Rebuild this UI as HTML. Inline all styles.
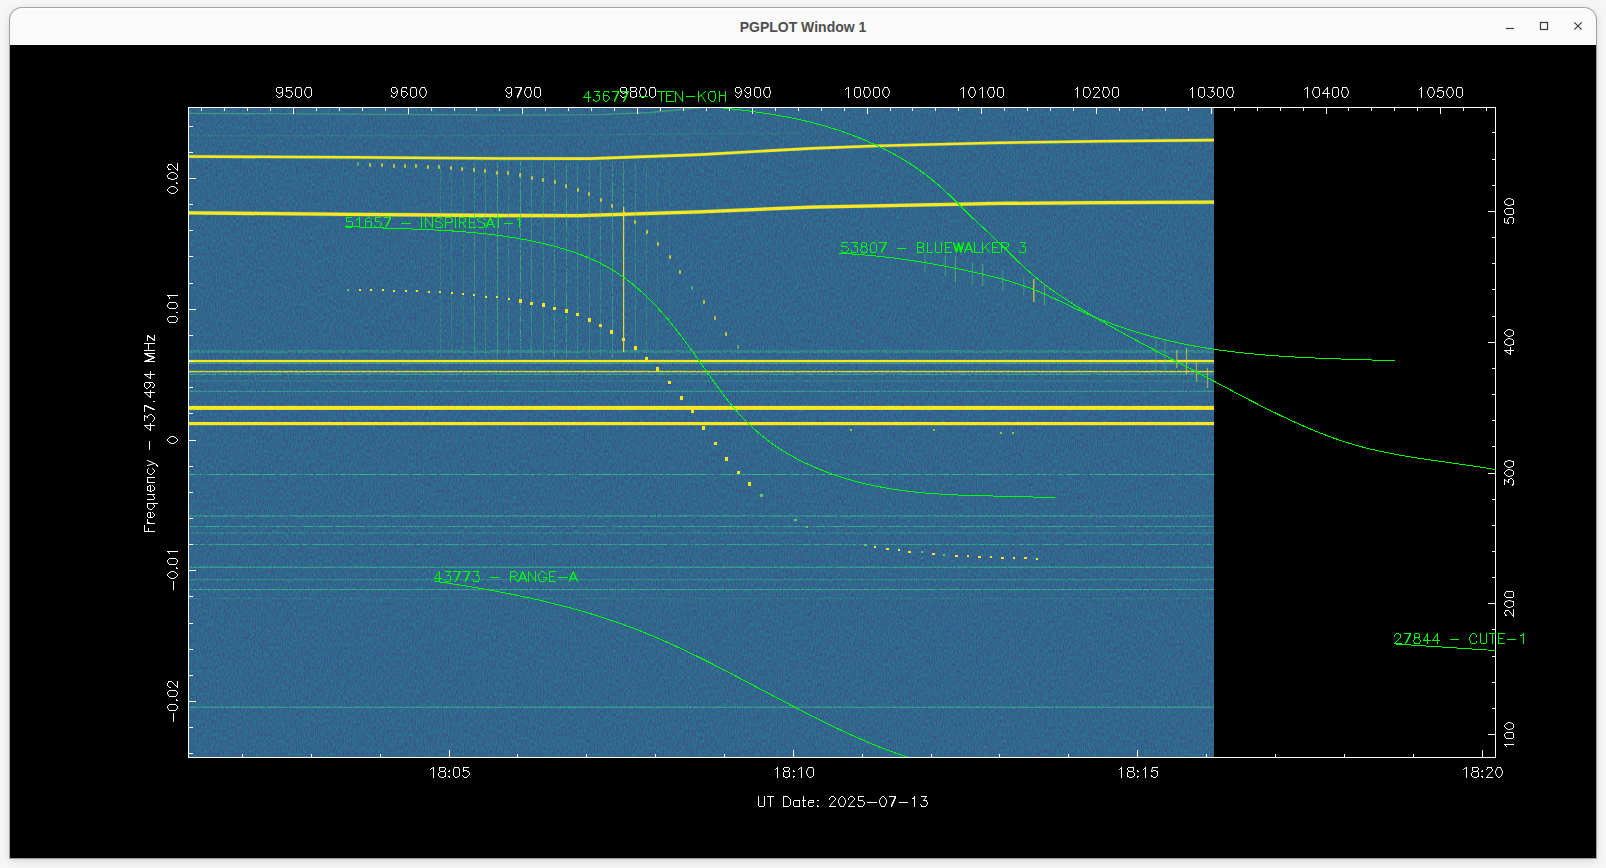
<!DOCTYPE html><html><head><meta charset="utf-8"><style>
html,body{margin:0;padding:0;width:1606px;height:868px;overflow:hidden;background:#f6f6f6;}
#win{position:absolute;left:10px;top:8px;width:1586px;height:850px;border-radius:12px 12px 0 0;background:#000;box-shadow:0 2px 8px rgba(0,0,0,0.16),0 0 0 1px rgba(0,0,0,0.3);}
#tb{position:absolute;left:0;top:0;width:1586px;height:37px;background:#fafafa;border-radius:12px 12px 0 0;box-shadow:inset 0 1px 0 #fff;}
#title{position:absolute;left:0;width:1586px;top:11px;text-align:center;font:bold 14px "Liberation Sans",sans-serif;color:#4f4f4f;letter-spacing:0px;}
svg{position:absolute;left:0;top:0;}
</style></head><body>
<div id="win"><div id="tb"><div id="title">PGPLOT Window 1</div></div></div>
<svg width="1606" height="868" viewBox="0 0 1606 868">
<g stroke="#3c3c3c" stroke-width="1.2" fill="none">
<path d="M1506 28.5H1514"/>
<rect x="1540.5" y="22.5" width="7" height="7"/>
<path d="M1574.3 22.3L1581.7 29.7M1581.7 22.3L1574.3 29.7"/>
</g>
<defs>
<filter id="nz" x="0" y="0" width="100%" height="100%" color-interpolation-filters="sRGB"><feTurbulence type="fractalNoise" baseFrequency="0.85 0.3" numOctaves="2" seed="3" result="t"/><feColorMatrix in="t" type="matrix" values="-0.14 0 0 0 0.266  0.32 0 0 0 0.24  0 0 0 0 0.553  0 0 0 0 1"/></filter>
<filter id="sp" x="0" y="0" width="100%" height="100%" color-interpolation-filters="sRGB"><feTurbulence type="fractalNoise" baseFrequency="0.5 0.5" numOctaves="2" seed="11" result="t"/><feColorMatrix in="t" type="matrix" values="0 0 0 0 0  0 0 0 0 0  0 0 0 0 0  6 0 0 0 -2.2" result="m"/><feComposite in="SourceGraphic" in2="m" operator="in"/></filter>
<clipPath id="dc"><rect x="189" y="108" width="1025" height="649"/></clipPath>
<clipPath id="pc"><rect x="189" y="108" width="1306" height="649"/></clipPath>
</defs>
<rect x="189" y="108" width="1025" height="649" fill="#32668d"/>
<rect x="189" y="108" width="1025" height="649" filter="url(#nz)"/>
<g clip-path="url(#dc)">
<g filter="url(#sp)">
<rect x="189" y="350" width="1025" height="3" fill="#3cbf8a" fill-opacity="0.375"/>
<rect x="189" y="362.8" width="1025" height="1" fill="#3cbf8a" fill-opacity="1"/>
<rect x="189" y="373.7" width="1025" height="1" fill="#3cbf8a" fill-opacity="1"/>
<rect x="189" y="390.8" width="1025" height="1" fill="#3cbf8a" fill-opacity="0.8250000000000001"/>
<rect x="189" y="380.5" width="1025" height="1" fill="#3cbf8a" fill-opacity="0.375"/>
<rect x="189" y="474" width="1025" height="1" fill="#3cbf8a" fill-opacity="0.9750000000000001"/>
<rect x="189" y="515.5" width="1025" height="1" fill="#3cbf8a" fill-opacity="0.9750000000000001"/>
<rect x="189" y="526" width="1025" height="1" fill="#3cbf8a" fill-opacity="0.8250000000000001"/>
<rect x="189" y="532.5" width="1025" height="1" fill="#3cbf8a" fill-opacity="0.5249999999999999"/>
<rect x="189" y="544" width="1025" height="1" fill="#3cbf8a" fill-opacity="0.75"/>
<rect x="189" y="566.7" width="1025" height="1" fill="#3cbf8a" fill-opacity="1"/>
<rect x="189" y="579.2" width="1025" height="1" fill="#3cbf8a" fill-opacity="0.6000000000000001"/>
<rect x="189" y="589.1" width="1025" height="1" fill="#3cbf8a" fill-opacity="0.9750000000000001"/>
<rect x="189" y="598.2" width="1025" height="1" fill="#3cbf8a" fill-opacity="0.27"/>
<rect x="189" y="706.7" width="1025" height="1" fill="#3cbf8a" fill-opacity="1"/>
<rect x="189" y="370.9" width="1025" height="1.3" fill="#fde725"/>
</g>
<rect x="189" y="350" width="1025" height="3" fill="#2fb08e" fill-opacity="0.1125"/>
<rect x="189" y="362.8" width="1025" height="1" fill="#2fb08e" fill-opacity="0.4275"/>
<rect x="189" y="373.7" width="1025" height="1" fill="#2fb08e" fill-opacity="0.36000000000000004"/>
<rect x="189" y="390.8" width="1025" height="1" fill="#2fb08e" fill-opacity="0.24750000000000003"/>
<rect x="189" y="380.5" width="1025" height="1" fill="#2fb08e" fill-opacity="0.1125"/>
<rect x="189" y="474" width="1025" height="1" fill="#2fb08e" fill-opacity="0.29250000000000004"/>
<rect x="189" y="515.5" width="1025" height="1" fill="#2fb08e" fill-opacity="0.29250000000000004"/>
<rect x="189" y="526" width="1025" height="1" fill="#2fb08e" fill-opacity="0.24750000000000003"/>
<rect x="189" y="532.5" width="1025" height="1" fill="#2fb08e" fill-opacity="0.1575"/>
<rect x="189" y="544" width="1025" height="1" fill="#2fb08e" fill-opacity="0.225"/>
<rect x="189" y="566.7" width="1025" height="1" fill="#2fb08e" fill-opacity="0.3825"/>
<rect x="189" y="579.2" width="1025" height="1" fill="#2fb08e" fill-opacity="0.18000000000000002"/>
<rect x="189" y="589.1" width="1025" height="1" fill="#2fb08e" fill-opacity="0.29250000000000004"/>
<rect x="189" y="598.2" width="1025" height="1" fill="#2fb08e" fill-opacity="0.081"/>
<rect x="189" y="706.7" width="1025" height="1" fill="#2fb08e" fill-opacity="0.405"/>
<rect x="189" y="370.9" width="1025" height="1.3" fill="#dfe02e" fill-opacity="0.7"/>
<rect x="189" y="359.9" width="1025" height="2.3" fill="#fde725"/>
<rect x="189" y="405.9" width="1025" height="4" fill="#fde725"/>
<rect x="189" y="422" width="1025" height="3.2" fill="#fde725"/>
<polyline points="189,113.4 350,114.2 524,115.1 600,114.6 650,112.5 682,109.5 700,107.8" stroke="#48c16e" stroke-opacity="0.55" stroke-width="1.3" fill="none"/>
<polyline points="189,135.7 500,135.5 800,133" stroke="#3cbb75" stroke-opacity="0.18" stroke-width="1.5" fill="none"/>
<polyline points="189,156.5 350,157.3 500,158.5 590,158.6 700,154.6 812,148.4 880,145.8 1000,142.8 1100,141.3 1213,140.1 1225,140" stroke="#5ec962" stroke-opacity="0.35" stroke-width="3.8" fill="none"/>
<polyline points="189,212.9 350,214.3 500,215.5 580,215.7 700,211.8 812,207.1 1000,203.4 1100,202.7 1213,202.2 1225,202.1" stroke="#5ec962" stroke-opacity="0.35" stroke-width="4.4" fill="none"/>
<polyline points="189,156.5 350,157.3 500,158.5 590,158.6 700,154.6 812,148.4 880,145.8 1000,142.8 1100,141.3 1213,140.1 1225,140" stroke="#fde725" stroke-width="2.6" fill="none"/>
<polyline points="189,212.9 350,214.3 500,215.5 580,215.7 700,211.8 812,207.1 1000,203.4 1100,202.7 1213,202.2 1225,202.1" stroke="#fde725" stroke-width="3.3" fill="none"/>
<g filter="url(#sp)">
<rect x="440" y="162" width="1" height="196" fill="#48c16e" fill-opacity="0.3"/>
<rect x="451" y="162" width="1" height="196" fill="#48c16e" fill-opacity="0.24"/>
<rect x="463" y="162" width="1" height="196" fill="#48c16e" fill-opacity="0.24"/>
<rect x="474" y="162" width="1" height="196" fill="#48c16e" fill-opacity="0.54"/>
<rect x="485" y="162" width="1" height="196" fill="#48c16e" fill-opacity="0.36"/>
<rect x="497" y="162" width="1" height="196" fill="#48c16e" fill-opacity="0.66"/>
<rect x="508" y="162" width="1" height="196" fill="#48c16e" fill-opacity="0.36"/>
<rect x="520" y="162" width="1" height="196" fill="#48c16e" fill-opacity="0.72"/>
<rect x="531" y="162" width="1" height="196" fill="#48c16e" fill-opacity="0.42"/>
<rect x="543" y="162" width="1" height="196" fill="#48c16e" fill-opacity="0.36"/>
<rect x="554" y="162" width="1" height="196" fill="#48c16e" fill-opacity="0.54"/>
<rect x="566" y="162" width="1" height="196" fill="#48c16e" fill-opacity="0.54"/>
<rect x="577" y="162" width="1" height="196" fill="#48c16e" fill-opacity="0.36"/>
<rect x="589" y="162" width="1" height="196" fill="#48c16e" fill-opacity="0.36"/>
<rect x="600" y="162" width="1" height="196" fill="#48c16e" fill-opacity="0.42"/>
<rect x="612" y="162" width="1" height="196" fill="#48c16e" fill-opacity="0.6"/>
<rect x="635" y="162" width="1" height="196" fill="#48c16e" fill-opacity="0.36"/>
<rect x="646" y="162" width="1" height="196" fill="#48c16e" fill-opacity="0.3"/>
<rect x="657" y="162" width="1" height="196" fill="#48c16e" fill-opacity="0.18"/>
<rect x="669" y="162" width="1" height="196" fill="#48c16e" fill-opacity="0.144"/>
<rect x="623" y="162" width="1" height="45" fill="#5ec962" fill-opacity="0.6"/>
</g>
<rect x="440" y="162" width="1" height="196" fill="#3cbb75" fill-opacity="0.0875"/>
<rect x="451" y="162" width="1" height="196" fill="#3cbb75" fill-opacity="0.06999999999999999"/>
<rect x="463" y="162" width="1" height="196" fill="#3cbb75" fill-opacity="0.06999999999999999"/>
<rect x="474" y="162" width="1" height="196" fill="#3cbb75" fill-opacity="0.1575"/>
<rect x="485" y="162" width="1" height="196" fill="#3cbb75" fill-opacity="0.105"/>
<rect x="497" y="162" width="1" height="196" fill="#3cbb75" fill-opacity="0.1925"/>
<rect x="508" y="162" width="1" height="196" fill="#3cbb75" fill-opacity="0.105"/>
<rect x="520" y="162" width="1" height="196" fill="#3cbb75" fill-opacity="0.21"/>
<rect x="531" y="162" width="1" height="196" fill="#3cbb75" fill-opacity="0.12249999999999998"/>
<rect x="543" y="162" width="1" height="196" fill="#3cbb75" fill-opacity="0.105"/>
<rect x="554" y="162" width="1" height="196" fill="#3cbb75" fill-opacity="0.1575"/>
<rect x="566" y="162" width="1" height="196" fill="#3cbb75" fill-opacity="0.1575"/>
<rect x="577" y="162" width="1" height="196" fill="#3cbb75" fill-opacity="0.105"/>
<rect x="589" y="162" width="1" height="196" fill="#3cbb75" fill-opacity="0.105"/>
<rect x="600" y="162" width="1" height="196" fill="#3cbb75" fill-opacity="0.12249999999999998"/>
<rect x="612" y="162" width="1" height="196" fill="#3cbb75" fill-opacity="0.175"/>
<rect x="635" y="162" width="1" height="196" fill="#3cbb75" fill-opacity="0.105"/>
<rect x="646" y="162" width="1" height="196" fill="#3cbb75" fill-opacity="0.0875"/>
<rect x="657" y="162" width="1" height="196" fill="#3cbb75" fill-opacity="0.0525"/>
<rect x="669" y="162" width="1" height="196" fill="#3cbb75" fill-opacity="0.041999999999999996"/>
<rect x="623" y="207" width="1.2" height="145" fill="#f0e530" fill-opacity="0.9"/>
<rect x="357.25" y="162.25" width="1.5" height="3.5" fill="#5ec962"/>
<rect x="369.25" y="163.25" width="1.5" height="3.5" fill="#f5e41e"/>
<rect x="381.25" y="163.25" width="1.5" height="3.5" fill="#f5e41e"/>
<rect x="393.25" y="164.25" width="1.5" height="3.5" fill="#f5e41e"/>
<rect x="404.25" y="164.25" width="1.5" height="3.5" fill="#f5e41e"/>
<rect x="415.25" y="164.25" width="1.5" height="3.5" fill="#f5e41e"/>
<rect x="427.25" y="165.25" width="1.5" height="3.5" fill="#f5e41e"/>
<rect x="438.25" y="165.25" width="1.5" height="3.5" fill="#f5e41e"/>
<rect x="450.25" y="166.25" width="1.5" height="3.5" fill="#f5e41e"/>
<rect x="461.25" y="167.25" width="1.5" height="3.5" fill="#f5e41e"/>
<rect x="473.25" y="168.25" width="1.5" height="3.5" fill="#f5e41e"/>
<rect x="484.25" y="169.25" width="1.5" height="3.5" fill="#f5e41e"/>
<rect x="496.25" y="171.25" width="1.5" height="3.5" fill="#f5e41e"/>
<rect x="507.25" y="171.25" width="1.5" height="3.5" fill="#f5e41e"/>
<rect x="519.25" y="173.25" width="1.5" height="3.5" fill="#f5e41e"/>
<rect x="531.25" y="176.25" width="1.5" height="3.5" fill="#f5e41e"/>
<rect x="542.25" y="178.25" width="1.5" height="3.5" fill="#f5e41e"/>
<rect x="554.25" y="180.25" width="1.5" height="3.5" fill="#f5e41e"/>
<rect x="565.25" y="184.25" width="1.5" height="3.5" fill="#f5e41e"/>
<rect x="577.25" y="188.25" width="1.5" height="3.5" fill="#f5e41e"/>
<rect x="588.25" y="192.25" width="1.5" height="3.5" fill="#f5e41e"/>
<rect x="600.25" y="198.25" width="1.5" height="3.5" fill="#f5e41e"/>
<rect x="611.25" y="204.25" width="1.5" height="3.5" fill="#f5e41e"/>
<rect x="623.25" y="211.25" width="1.5" height="3.5" fill="#f5e41e"/>
<rect x="634.25" y="220.25" width="1.5" height="3.5" fill="#f5e41e"/>
<rect x="646.25" y="230.25" width="1.5" height="3.5" fill="#f5e41e"/>
<rect x="657.25" y="242.25" width="1.5" height="3.5" fill="#f5e41e"/>
<rect x="669.25" y="255.25" width="1.5" height="3.5" fill="#f5e41e"/>
<rect x="679.25" y="270.25" width="1.5" height="3.5" fill="#f5e41e"/>
<rect x="691.25" y="286.25" width="1.5" height="3.5" fill="#5ec962"/>
<rect x="703.25" y="300.25" width="1.5" height="3.5" fill="#f5e41e"/>
<rect x="714.25" y="316.25" width="1.5" height="3.5" fill="#f5e41e"/>
<rect x="725.25" y="332.25" width="1.5" height="3.5" fill="#f5e41e"/>
<rect x="737.25" y="345.25" width="1.5" height="3.5" fill="#5ec962"/>
<rect x="347" y="289" width="2" height="2" fill="#5ec962"/>
<rect x="359" y="289" width="2" height="2" fill="#f5e41e"/>
<rect x="370" y="289" width="2" height="2" fill="#f5e41e"/>
<rect x="382" y="289" width="2" height="2" fill="#f5e41e"/>
<rect x="393" y="290" width="2" height="2" fill="#f5e41e"/>
<rect x="405" y="290" width="2" height="2" fill="#f5e41e"/>
<rect x="416" y="290" width="2" height="2" fill="#f5e41e"/>
<rect x="428" y="291" width="2" height="2" fill="#f5e41e"/>
<rect x="439" y="291" width="2" height="2" fill="#f5e41e"/>
<rect x="451" y="292" width="2" height="2" fill="#f5e41e"/>
<rect x="462" y="293" width="2" height="2" fill="#f5e41e"/>
<rect x="473" y="294" width="2" height="2" fill="#f5e41e"/>
<rect x="485" y="296" width="2" height="2" fill="#f5e41e"/>
<rect x="496" y="296" width="2" height="2" fill="#f5e41e"/>
<rect x="508" y="298" width="2" height="2" fill="#f5e41e"/>
<rect x="519" y="299" width="3" height="4" fill="#f5e41e"/>
<rect x="530" y="302" width="3" height="3" fill="#f5e41e"/>
<rect x="542" y="303" width="3" height="4" fill="#f5e41e"/>
<rect x="553" y="307" width="3" height="3" fill="#f5e41e"/>
<rect x="565" y="309" width="3" height="4" fill="#f5e41e"/>
<rect x="576" y="313" width="3" height="3" fill="#f5e41e"/>
<rect x="588" y="318" width="3" height="4" fill="#f5e41e"/>
<rect x="599" y="324" width="3" height="3" fill="#f5e41e"/>
<rect x="610" y="330" width="3" height="4" fill="#f5e41e"/>
<rect x="622" y="338" width="3" height="3" fill="#f5e41e"/>
<rect x="634" y="346" width="3" height="4" fill="#f5e41e"/>
<rect x="645" y="357" width="3" height="3" fill="#f5e41e"/>
<rect x="656" y="367" width="3" height="4" fill="#f5e41e"/>
<rect x="668" y="381" width="3" height="3" fill="#f5e41e"/>
<rect x="680" y="396" width="3" height="4" fill="#f5e41e"/>
<rect x="691" y="410" width="3" height="3" fill="#f5e41e"/>
<rect x="702" y="426" width="3" height="4" fill="#f5e41e"/>
<rect x="714" y="442" width="3" height="3" fill="#f5e41e"/>
<rect x="725" y="457" width="3" height="4" fill="#f5e41e"/>
<rect x="737" y="471" width="3" height="3" fill="#f5e41e"/>
<rect x="748" y="482" width="3" height="4" fill="#f5e41e"/>
<rect x="760" y="494" width="3" height="3" fill="#5ec962"/>
<rect x="794" y="519" width="3" height="2" fill="#5ec962"/>
<rect x="806" y="526" width="2" height="2" fill="#5ec962"/>
<rect x="864" y="544" width="3" height="2" fill="#5ec962"/>
<rect x="874" y="546" width="2" height="2" fill="#f5e41e"/>
<rect x="886" y="548" width="3" height="2" fill="#f5e41e"/>
<rect x="898" y="549" width="2" height="2" fill="#f5e41e"/>
<rect x="908" y="551" width="3" height="2" fill="#f5e41e"/>
<rect x="921" y="551" width="2" height="2" fill="#5ec962"/>
<rect x="932" y="553" width="3" height="2" fill="#f5e41e"/>
<rect x="943" y="554" width="2" height="2" fill="#5ec962"/>
<rect x="955" y="555" width="3" height="2" fill="#f5e41e"/>
<rect x="967" y="555" width="2" height="2" fill="#f5e41e"/>
<rect x="978" y="556" width="3" height="2" fill="#f5e41e"/>
<rect x="990" y="556" width="2" height="2" fill="#f5e41e"/>
<rect x="1001" y="557" width="3" height="2" fill="#f5e41e"/>
<rect x="1013" y="557" width="2" height="2" fill="#f5e41e"/>
<rect x="1024" y="557" width="3" height="2" fill="#f5e41e"/>
<rect x="1036" y="558" width="2" height="2" fill="#f5e41e"/>
<rect x="933" y="429" width="2" height="2" fill="#b5de2b" fill-opacity="0.8"/>
<rect x="1012" y="432" width="2" height="2" fill="#b5de2b" fill-opacity="0.8"/>
<rect x="1000" y="432" width="2" height="2" fill="#b5de2b" fill-opacity="0.8"/>
<rect x="850" y="429" width="2" height="2" fill="#b5de2b" fill-opacity="0.8"/>
<rect x="924.4" y="252" width="1.2" height="20" fill="#4cc26c" fill-opacity="0.45"/>
<rect x="944.7" y="255" width="1.2" height="21" fill="#4cc26c" fill-opacity="0.55"/>
<rect x="954.8" y="256" width="1.2" height="26" fill="#5ec962" fill-opacity="0.6"/>
<rect x="971.8" y="262" width="1.2" height="22" fill="#4cc26c" fill-opacity="0.5"/>
<rect x="982.1" y="264" width="1.2" height="22" fill="#5ec962" fill-opacity="0.6"/>
<rect x="1002.2" y="270" width="1.2" height="22" fill="#4cc26c" fill-opacity="0.5"/>
<rect x="1023.1" y="276" width="1.2" height="20" fill="#4cc26c" fill-opacity="0.45"/>
<rect x="1033.2" y="279" width="1.2" height="23" fill="#e8e020" fill-opacity="0.9"/>
<rect x="1043.9" y="284" width="1.2" height="21" fill="#5ec962" fill-opacity="0.6"/>
<rect x="1155.4" y="338" width="1.2" height="34" fill="#4cc26c" fill-opacity="0.4"/>
<rect x="1164.4" y="340" width="1.2" height="32" fill="#4cc26c" fill-opacity="0.5"/>
<rect x="1176.2" y="350" width="1.2" height="18" fill="#f0e428" fill-opacity="0.6"/>
<rect x="1185.9" y="348" width="1.2" height="27" fill="#f0e428" fill-opacity="0.6"/>
<rect x="1195.9" y="360" width="1.2" height="22" fill="#f0e428" fill-opacity="0.55"/>
<rect x="1206.9" y="368" width="1.2" height="20" fill="#f0e428" fill-opacity="0.55"/>
</g>
<g clip-path="url(#pc)" stroke="#00ff00" stroke-width="1" fill="none" shape-rendering="crispEdges">
<polyline points="700,105.87 702,106.05 704,106.23 706,106.41 708,106.6 710,106.79 712,106.98 714,107.17 716,107.36 718,107.56 720,107.75 722,107.95 724,108.16 726,108.37 728,108.58 730,108.79 732,109.01 734,109.23 736,109.45 738,109.68 740,109.92 742,110.15 744,110.4 746,110.64 748,110.9 750,111.15 752,111.42 754,111.68 756,111.96 758,112.24 760,112.52 762,112.82 764,113.11 766,113.42 768,113.73 770,114.05 772,114.37 774,114.71 776,115.05 778,115.39 780,115.75 782,116.11 784,116.48 786,116.86 788,117.25 790,117.64 792,118.05 794,118.46 796,118.88 798,119.31 800,119.75 802,120.2 804,120.66 806,121.13 808,121.61 810,122.1 812,122.61 814,123.12 816,123.64 818,124.17 820,124.71 822,125.27 824,125.84 826,126.41 828,127 830,127.61 832,128.22 834,128.84 836,129.48 838,130.13 840,130.8 842,131.47 844,132.16 846,132.87 848,133.58 850,134.31 852,135.06 854,135.81 856,136.59 858,137.37 860,138.17 862,138.99 864,139.82 866,140.66 868,141.52 870,142.4 872,143.29 874,144.19 876,145.12 878,146.05 880,147.01 882,147.98 884,148.97 886,149.98 888,151.01 890,152.06 892,153.12 894,154.21 896,155.32 898,156.45 900,157.61 902,158.79 904,159.99 906,161.22 908,162.47 910,163.74 912,165.05 914,166.38 916,167.73 918,169.12 920,170.53 922,171.98 924,173.45 926,174.95 928,176.49 930,178.05 932,179.65 934,181.28 936,182.94 938,184.64 940,186.37 942,188.14 944,189.94 946,191.78 948,193.65 950,195.56 952,197.51 954,199.49 956,201.49 958,203.5 960,205.52 962,207.54 964,209.55 966,211.54 968,213.51 970,215.46 972,217.37 974,219.26 976,221.13 978,222.98 980,224.82 982,226.65 984,228.49 986,230.33 988,232.19 990,234.06 992,235.95 994,237.87 996,239.8 998,241.75 1000,243.71 1002,245.68 1004,247.66 1006,249.63 1008,251.61 1010,253.58 1012,255.55 1014,257.51 1016,259.46 1018,261.39 1020,263.3 1022,265.2 1024,267.07 1026,268.91 1028,270.72 1030,272.5 1032,274.25 1034,275.96 1036,277.63 1038,279.28 1040,280.89 1042,282.48 1044,284.03 1046,285.56 1048,287.06 1050,288.53 1052,289.98 1054,291.41 1056,292.81 1058,294.2 1060,295.56 1062,296.9 1064,298.23 1066,299.54 1068,300.84 1070,302.12 1072,303.39 1074,304.64 1076,305.89 1078,307.12 1080,308.35 1082,309.57 1084,310.78 1086,311.98 1088,313.18 1090,314.37 1092,315.56 1094,316.73 1096,317.91 1098,319.07 1100,320.23 1102,321.38 1104,322.53 1106,323.67 1108,324.81 1110,325.94 1112,327.06 1114,328.18 1116,329.3 1118,330.41 1120,331.52 1122,332.62 1124,333.72 1126,334.81 1128,335.9 1130,336.99 1132,338.07 1134,339.15 1136,340.22 1138,341.3 1140,342.37 1142,343.43 1144,344.5 1146,345.56 1148,346.62 1150,347.68 1152,348.73 1154,349.78 1156,350.84 1158,351.89 1160,352.93 1162,353.98 1164,355.03 1166,356.07 1168,357.12 1170,358.16 1172,359.2 1174,360.25 1176,361.29 1178,362.33 1180,363.37 1182,364.42 1184,365.46 1186,366.5 1188,367.55 1190,368.59 1192,369.64 1194,370.69 1196,371.74 1198,372.79 1200,373.84 1202,374.89 1204,375.95 1206,377.01 1208,378.07 1210,379.13 1212,380.19 1214,381.25 1216,382.31 1218,383.37 1220,384.43 1222,385.49 1224,386.55 1226,387.61 1228,388.67 1230,389.73 1232,390.79 1234,391.84 1236,392.89 1238,393.95 1240,395 1242,396.04 1244,397.09 1246,398.13 1248,399.17 1250,400.21 1252,401.24 1254,402.27 1256,403.29 1258,404.31 1260,405.33 1262,406.34 1264,407.35 1266,408.36 1268,409.36 1270,410.35 1272,411.34 1274,412.32 1276,413.3 1278,414.27 1280,415.23 1282,416.19 1284,417.14 1286,418.08 1288,419.02 1290,419.95 1292,420.87 1294,421.79 1296,422.7 1298,423.6 1300,424.49 1302,425.37 1304,426.24 1306,427.11 1308,427.96 1310,428.81 1312,429.64 1314,430.47 1316,431.29 1318,432.09 1320,432.89 1322,433.68 1324,434.45 1326,435.22 1328,435.97 1330,436.71 1332,437.44 1334,438.16 1336,438.86 1338,439.56 1340,440.24 1342,440.91 1344,441.57 1346,442.21 1348,442.84 1350,443.45 1352,444.06 1354,444.65 1356,445.22 1358,445.79 1360,446.34 1362,446.88 1364,447.4 1366,447.92 1368,448.42 1370,448.91 1372,449.39 1374,449.87 1376,450.33 1378,450.78 1380,451.22 1382,451.65 1384,452.07 1386,452.48 1388,452.89 1390,453.29 1392,453.67 1394,454.06 1396,454.43 1398,454.79 1400,455.15 1402,455.51 1404,455.85 1406,456.19 1408,456.53 1410,456.86 1412,457.18 1414,457.5 1416,457.81 1418,458.12 1420,458.43 1422,458.73 1424,459.03 1426,459.32 1428,459.61 1430,459.9 1432,460.19 1434,460.47 1436,460.76 1438,461.04 1440,461.32 1442,461.6 1444,461.87 1446,462.15 1448,462.43 1450,462.71 1452,462.99 1454,463.26 1456,463.54 1458,463.82 1460,464.11 1462,464.39 1464,464.68 1466,464.97 1468,465.26 1470,465.55 1472,465.85 1474,466.15 1476,466.45 1478,466.76 1480,467.08 1482,467.39 1484,467.72 1486,468.04 1488,468.38 1490,468.72 1492,469.06 1494,469.41 1495,469.59"/>
<polyline points="345,226.3 347,226.41 349,226.52 351,226.63 353,226.73 355,226.83 357,226.93 359,227.02 361,227.11 363,227.2 365,227.29 367,227.37 369,227.45 371,227.53 373,227.61 375,227.69 377,227.77 379,227.84 381,227.92 383,227.99 385,228.06 387,228.13 389,228.2 391,228.27 393,228.34 395,228.41 397,228.48 399,228.55 401,228.62 403,228.69 405,228.76 407,228.84 409,228.91 411,228.98 413,229.06 415,229.14 417,229.21 419,229.29 421,229.38 423,229.46 425,229.54 427,229.63 429,229.72 431,229.82 433,229.91 435,230.01 437,230.11 439,230.22 441,230.32 443,230.43 445,230.55 447,230.67 449,230.79 451,230.91 453,231.04 455,231.18 457,231.32 459,231.46 461,231.61 463,231.76 465,231.92 467,232.08 469,232.25 471,232.42 473,232.6 475,232.79 477,232.98 479,233.17 481,233.38 483,233.58 485,233.8 487,234.02 489,234.25 491,234.49 493,234.73 495,234.98 497,235.24 499,235.5 501,235.77 503,236.05 505,236.34 507,236.64 509,236.94 511,237.25 513,237.57 515,237.9 517,238.24 519,238.59 521,238.94 523,239.31 525,239.68 527,240.07 529,240.46 531,240.86 533,241.28 535,241.7 537,242.13 539,242.58 541,243.03 543,243.49 545,243.97 547,244.46 549,244.95 551,245.46 553,245.98 555,246.52 557,247.06 559,247.62 561,248.18 563,248.77 565,249.37 567,249.98 569,250.61 571,251.26 573,251.93 575,252.61 577,253.32 579,254.04 581,254.79 583,255.56 585,256.35 587,257.17 589,258.01 591,258.88 593,259.77 595,260.7 597,261.65 599,262.62 601,263.63 603,264.67 605,265.74 607,266.84 609,267.98 611,269.15 613,270.35 615,271.59 617,272.87 619,274.18 621,275.54 623,276.93 625,278.36 627,279.83 629,281.34 631,282.89 633,284.49 635,286.13 637,287.81 639,289.55 641,291.32 643,293.15 645,295.01 647,296.93 649,298.89 651,300.89 653,302.94 655,305.03 657,307.16 659,309.34 661,311.56 663,313.82 665,316.12 667,318.46 669,320.83 671,323.25 673,325.71 675,328.2 677,330.74 679,333.31 681,335.91 683,338.55 685,341.22 687,343.93 689,346.66 691,349.41 693,352.19 695,354.99 697,357.8 699,360.63 701,363.47 703,366.33 705,369.18 707,372.04 709,374.88 711,377.72 713,380.55 715,383.35 717,386.13 719,388.88 721,391.59 723,394.27 725,396.9 727,399.49 729,402.02 731,404.49 733,406.91 735,409.26 737,411.56 739,413.8 741,415.98 743,418.11 745,420.19 747,422.22 749,424.19 751,426.11 753,427.98 755,429.81 757,431.59 759,433.32 761,435 763,436.65 765,438.25 767,439.8 769,441.32 771,442.8 773,444.24 775,445.64 777,447 779,448.33 781,449.62 783,450.88 785,452.11 787,453.3 789,454.47 791,455.61 793,456.71 795,457.8 797,458.85 799,459.88 801,460.89 803,461.87 805,462.83 807,463.77 809,464.69 811,465.59 813,466.47 815,467.34 817,468.19 819,469.02 821,469.83 823,470.63 825,471.41 827,472.17 829,472.91 831,473.64 833,474.35 835,475.05 837,475.73 839,476.4 841,477.05 843,477.68 845,478.3 847,478.91 849,479.5 851,480.07 853,480.63 855,481.18 857,481.71 859,482.23 861,482.74 863,483.23 865,483.71 867,484.18 869,484.63 871,485.08 873,485.51 875,485.92 877,486.33 879,486.72 881,487.1 883,487.47 885,487.83 887,488.18 889,488.52 891,488.85 893,489.16 895,489.47 897,489.77 899,490.05 901,490.33 903,490.6 905,490.86 907,491.1 909,491.35 911,491.58 913,491.8 915,492.02 917,492.22 919,492.42 921,492.61 923,492.8 925,492.97 927,493.14 929,493.31 931,493.46 933,493.61 935,493.75 937,493.89 939,494.02 941,494.15 943,494.26 945,494.38 947,494.49 949,494.59 951,494.69 953,494.78 955,494.87 957,494.96 959,495.04 961,495.12 963,495.19 965,495.27 967,495.33 969,495.4 971,495.46 973,495.52 975,495.57 977,495.63 979,495.68 981,495.73 983,495.78 985,495.83 987,495.87 989,495.92 991,495.96 993,496 995,496.05 997,496.09 999,496.13 1001,496.17 1003,496.21 1005,496.26 1007,496.3 1009,496.34 1011,496.39 1013,496.43 1015,496.48 1017,496.53 1019,496.58 1021,496.63 1023,496.69 1025,496.74 1027,496.8 1029,496.87 1031,496.93 1033,497 1035,497.07 1037,497.15 1039,497.23 1041,497.31 1043,497.4 1045,497.49 1047,497.58 1049,497.68 1051,497.79 1053,497.9 1055,498.01"/>
<polyline points="839,253.35 841,253.44 843,253.53 845,253.62 847,253.73 849,253.84 851,253.96 853,254.08 855,254.21 857,254.35 859,254.49 861,254.65 863,254.8 865,254.97 867,255.14 869,255.32 871,255.5 873,255.69 875,255.88 877,256.09 879,256.29 881,256.51 883,256.73 885,256.96 887,257.19 889,257.43 891,257.67 893,257.92 895,258.17 897,258.44 899,258.7 901,258.97 903,259.25 905,259.54 907,259.82 909,260.12 911,260.42 913,260.72 915,261.03 917,261.35 919,261.67 921,261.99 923,262.32 925,262.65 927,262.99 929,263.34 931,263.69 933,264.04 935,264.4 937,264.76 939,265.13 941,265.5 943,265.88 945,266.26 947,266.64 949,267.03 951,267.43 953,267.82 955,268.23 957,268.63 959,269.04 961,269.46 963,269.87 965,270.3 967,270.72 969,271.15 971,271.58 973,272.02 975,272.46 977,272.91 979,273.36 981,273.82 983,274.28 985,274.75 987,275.23 989,275.71 991,276.2 993,276.71 995,277.22 997,277.74 999,278.26 1001,278.8 1003,279.35 1005,279.92 1007,280.49 1009,281.07 1011,281.67 1013,282.28 1015,282.91 1017,283.55 1019,284.2 1021,284.87 1023,285.55 1025,286.25 1027,286.96 1029,287.69 1031,288.44 1033,289.21 1035,289.99 1037,290.8 1039,291.62 1041,292.46 1043,293.32 1045,294.2 1047,295.09 1049,296 1051,296.92 1053,297.85 1055,298.79 1057,299.74 1059,300.69 1061,301.65 1063,302.61 1065,303.58 1067,304.54 1069,305.5 1071,306.46 1073,307.41 1075,308.36 1077,309.29 1079,310.22 1081,311.14 1083,312.04 1085,312.94 1087,313.82 1089,314.69 1091,315.54 1093,316.39 1095,317.22 1097,318.05 1099,318.86 1101,319.66 1103,320.45 1105,321.22 1107,321.99 1109,322.75 1111,323.49 1113,324.22 1115,324.95 1117,325.66 1119,326.36 1121,327.05 1123,327.74 1125,328.41 1127,329.07 1129,329.72 1131,330.36 1133,330.99 1135,331.61 1137,332.22 1139,332.82 1141,333.42 1143,334 1145,334.57 1147,335.13 1149,335.69 1151,336.23 1153,336.77 1155,337.3 1157,337.82 1159,338.33 1161,338.83 1163,339.32 1165,339.8 1167,340.28 1169,340.75 1171,341.2 1173,341.65 1175,342.1 1177,342.53 1179,342.96 1181,343.38 1183,343.79 1185,344.19 1187,344.58 1189,344.97 1191,345.35 1193,345.73 1195,346.09 1197,346.45 1199,346.8 1201,347.15 1203,347.48 1205,347.82 1207,348.14 1209,348.46 1211,348.77 1213,349.07 1215,349.37 1217,349.66 1219,349.95 1221,350.23 1223,350.5 1225,350.77 1227,351.03 1229,351.28 1231,351.53 1233,351.78 1235,352.02 1237,352.25 1239,352.48 1241,352.7 1243,352.92 1245,353.13 1247,353.34 1249,353.54 1251,353.74 1253,353.93 1255,354.12 1257,354.3 1259,354.48 1261,354.66 1263,354.83 1265,354.99 1267,355.15 1269,355.31 1271,355.47 1273,355.62 1275,355.76 1277,355.9 1279,356.04 1281,356.18 1283,356.31 1285,356.44 1287,356.56 1289,356.68 1291,356.8 1293,356.92 1295,357.03 1297,357.14 1299,357.25 1301,357.35 1303,357.45 1305,357.55 1307,357.65 1309,357.74 1311,357.84 1313,357.93 1315,358.01 1317,358.1 1319,358.18 1321,358.27 1323,358.35 1325,358.43 1327,358.5 1329,358.58 1331,358.65 1333,358.73 1335,358.8 1337,358.87 1339,358.94 1341,359.01 1343,359.07 1345,359.14 1347,359.21 1349,359.27 1351,359.34 1353,359.4 1355,359.46 1357,359.53 1359,359.59 1361,359.66 1363,359.72 1365,359.78 1367,359.85 1369,359.91 1371,359.97 1373,360.04 1375,360.1 1377,360.17 1379,360.24 1381,360.3 1383,360.37 1385,360.44 1387,360.51 1389,360.58 1391,360.65 1393,360.73 1395,360.8"/>
<polyline points="434,581.09 436,581.39 438,581.68 440,581.98 442,582.28 444,582.58 446,582.88 448,583.19 450,583.5 452,583.8 454,584.11 456,584.43 458,584.74 460,585.06 462,585.38 464,585.7 466,586.03 468,586.35 470,586.68 472,587.01 474,587.35 476,587.69 478,588.03 480,588.37 482,588.71 484,589.06 486,589.42 488,589.77 490,590.13 492,590.49 494,590.86 496,591.22 498,591.6 500,591.97 502,592.35 504,592.73 506,593.12 508,593.51 510,593.9 512,594.3 514,594.7 516,595.11 518,595.52 520,595.93 522,596.35 524,596.77 526,597.2 528,597.63 530,598.07 532,598.51 534,598.95 536,599.4 538,599.86 540,600.32 542,600.78 544,601.25 546,601.72 548,602.2 550,602.69 552,603.18 554,603.67 556,604.17 558,604.68 560,605.19 562,605.7 564,606.23 566,606.75 568,607.29 570,607.83 572,608.37 574,608.92 576,609.48 578,610.04 580,610.61 582,611.18 584,611.77 586,612.35 588,612.95 590,613.55 592,614.15 594,614.77 596,615.39 598,616.01 600,616.65 602,617.29 604,617.94 606,618.59 608,619.25 610,619.92 612,620.59 614,621.28 616,621.97 618,622.66 620,623.37 622,624.08 624,624.8 626,625.53 628,626.26 630,627 632,627.75 634,628.51 636,629.28 638,630.05 640,630.83 642,631.62 644,632.42 646,633.23 648,634.04 650,634.86 652,635.7 654,636.54 656,637.38 658,638.24 660,639.1 662,639.97 664,640.85 666,641.74 668,642.63 670,643.53 672,644.44 674,645.35 676,646.27 678,647.2 680,648.13 682,649.07 684,650.02 686,650.97 688,651.93 690,652.89 692,653.86 694,654.83 696,655.81 698,656.79 700,657.78 702,658.77 704,659.77 706,660.77 708,661.78 710,662.79 712,663.8 714,664.82 716,665.84 718,666.86 720,667.89 722,668.92 724,669.95 726,670.99 728,672.03 730,673.07 732,674.11 734,675.16 736,676.21 738,677.26 740,678.31 742,679.36 744,680.41 746,681.47 748,682.53 750,683.58 752,684.64 754,685.7 756,686.76 758,687.82 760,688.88 762,689.94 764,691 766,692.06 768,693.12 770,694.18 772,695.24 774,696.3 776,697.36 778,698.41 780,699.47 782,700.52 784,701.57 786,702.62 788,703.67 790,704.71 792,705.76 794,706.8 796,707.84 798,708.87 800,709.9 802,710.93 804,711.96 806,712.99 808,714.01 810,715.02 812,716.03 814,717.04 816,718.05 818,719.05 820,720.05 822,721.04 824,722.02 826,723.01 828,723.98 830,724.96 832,725.92 834,726.89 836,727.84 838,728.79 840,729.74 842,730.68 844,731.61 846,732.53 848,733.45 850,734.37 852,735.27 854,736.17 856,737.07 858,737.95 860,738.83 862,739.7 864,740.56 866,741.42 868,742.26 870,743.1 872,743.93 874,744.75 876,745.57 878,746.37 880,747.17 882,747.95 884,748.73 886,749.5 888,750.26 890,751 892,751.74 894,752.47 896,753.19 898,753.9 900,754.6 902,755.29 904,755.96 906,756.63 908,757.28 910,757.93 912,758.56 914,759.18 916,759.79 918,760.39 920,760.97 922,761.55 924,762.11 926,762.66 928,763.19 930,763.72"/>
<polyline points="1394,643.9 1495,650.5"/>
</g>
<g stroke="#ffffff" stroke-width="1" fill="none" shape-rendering="crispEdges">
<rect x="188.5" y="107.5" width="1307" height="649.5"/>
<path d="M201.5 108V111M224.5 108V111M247.5 108V111M270.5 108V111M293.5 108V114M316.5 108V111M339.5 108V111M362.5 108V111M385.5 108V111M408.5 108V114M431.5 108V111M454.5 108V111M476.5 108V111M499.5 108V111M522.5 108V114M545.5 108V111M568.5 108V111M591.5 108V111M614.5 108V111M637.5 108V114M660.5 108V111M683.5 108V111M706.5 108V111M729.5 108V111M752.5 108V114M775.5 108V111M798.5 108V111M821.5 108V111M844.5 108V111M867.5 108V114M890.5 108V111M912.5 108V111M935.5 108V111M958.5 108V111M981.5 108V114M1004.5 108V111M1027.5 108V111M1050.5 108V111M1073.5 108V111M1096.5 108V114M1119.5 108V111M1142.5 108V111M1165.5 108V111M1188.5 108V111M1211.5 108V114M1234.5 108V111M1257.5 108V111M1280.5 108V111M1303.5 108V111M1326.5 108V114M1348.5 108V111M1371.5 108V111M1394.5 108V111M1417.5 108V111M1440.5 108V114M1463.5 108V111M1486.5 108V111M242.5 757V753.5M311.5 757V753.5M380.5 757V753.5M449.5 757V750M517.5 757V753.5M586.5 757V753.5M655.5 757V753.5M724.5 757V753.5M793.5 757V750M862.5 757V753.5M931.5 757V753.5M999.5 757V753.5M1068.5 757V753.5M1137.5 757V750M1206.5 757V753.5M1275.5 757V753.5M1344.5 757V753.5M1413.5 757V753.5M1482.5 757V750M189 126.5H192.5M189 152.5H192.5M189 178.5H196M189 204.5H192.5M189 230.5H192.5M189 256.5H192.5M189 283.5H192.5M189 309.5H196M189 335.5H192.5M189 361.5H192.5M189 387.5H192.5M189 413.5H192.5M189 440.5H196M189 466.5H192.5M189 492.5H192.5M189 518.5H192.5M189 544.5H192.5M189 570.5H196M189 596.5H192.5M189 623.5H192.5M189 649.5H192.5M189 675.5H192.5M189 701.5H196M189 727.5H192.5M189 753.5H192.5M1495 734.5H1488M1495 708.5H1491.5M1495 682.5H1491.5M1495 656.5H1491.5M1495 629.5H1491.5M1495 603.5H1488M1495 577.5H1491.5M1495 551.5H1491.5M1495 525.5H1491.5M1495 499.5H1491.5M1495 473.5H1488M1495 446.5H1491.5M1495 420.5H1491.5M1495 394.5H1491.5M1495 368.5H1491.5M1495 342.5H1488M1495 316.5H1491.5M1495 289.5H1491.5M1495 263.5H1491.5M1495 237.5H1491.5M1495 211.5H1488M1495 185.5H1491.5M1495 159.5H1491.5M1495 132.5H1491.5"/>
</g>
<path d="M276.5 90.5L276.5 90.5M276.5 90.5L276.5 88.5M276.5 90.5L276.5 91.5M276.5 88.5L277.5 87.5M276.5 91.5L277.5 92.5M276.5 95.5L277.5 96.5M277.5 96.5L278.5 97.5M277.5 87.5L279.5 87.5M277.5 92.5L279.5 93.5M278.5 97.5L279.5 97.5M279.5 87.5L279.5 87.5M279.5 93.5L279.5 93.5M279.5 87.5L281.5 87.5M279.5 93.5L281.5 92.5M279.5 97.5L281.5 96.5M281.5 87.5L282.5 88.5M281.5 92.5L282.5 91.5M281.5 96.5L282.5 95.5M282.5 88.5L282.5 90.5M282.5 91.5L282.5 90.5M282.5 95.5L282.5 92.5M282.5 90.5L282.5 92.5M285.5 95.5L286.5 96.5M286.5 91.5L286.5 87.5M286.5 91.5L286.5 91.5M286.5 96.5L286.5 96.5M286.5 87.5L291.5 87.5M286.5 91.5L288.5 90.5M286.5 96.5L288.5 97.5M288.5 90.5L289.5 90.5M288.5 97.5L289.5 97.5M289.5 90.5L291.5 91.5M289.5 97.5L291.5 96.5M291.5 91.5L291.5 91.5M291.5 96.5L291.5 95.5M291.5 91.5L292.5 93.5M291.5 95.5L292.5 94.5M292.5 93.5L292.5 94.5M295.5 91.5L295.5 92.5M295.5 91.5L295.5 89.5M295.5 92.5L295.5 95.5M295.5 89.5L296.5 87.5M295.5 95.5L296.5 96.5M296.5 87.5L298.5 87.5M296.5 96.5L298.5 97.5M298.5 87.5L299.5 87.5M298.5 97.5L299.5 97.5M299.5 87.5L300.5 87.5M299.5 97.5L300.5 96.5M300.5 87.5L301.5 89.5M300.5 96.5L301.5 95.5M301.5 89.5L301.5 91.5M301.5 95.5L301.5 92.5M301.5 91.5L301.5 92.5M304.5 91.5L304.5 92.5M304.5 91.5L305.5 89.5M304.5 92.5L305.5 95.5M305.5 89.5L306.5 87.5M305.5 95.5L306.5 96.5M306.5 87.5L307.5 87.5M306.5 96.5L307.5 97.5M307.5 87.5L308.5 87.5M307.5 97.5L308.5 97.5M308.5 87.5L310.5 87.5M308.5 97.5L310.5 96.5M310.5 87.5L311.5 89.5M310.5 96.5L311.5 95.5M311.5 89.5L311.5 91.5M311.5 95.5L311.5 92.5M311.5 91.5L311.5 92.5" stroke="#ffffff" stroke-width="1.0" stroke-opacity="1.0" fill="none" stroke-linecap="square"/>
<path d="M391.5 90.5L391.5 90.5M391.5 90.5L391.5 88.5M391.5 90.5L391.5 91.5M391.5 88.5L392.5 87.5M391.5 91.5L392.5 92.5M391.5 95.5L391.5 96.5M391.5 96.5L393.5 97.5M392.5 87.5L393.5 87.5M392.5 92.5L393.5 93.5M393.5 97.5L394.5 97.5M393.5 87.5L394.5 87.5M393.5 93.5L394.5 93.5M394.5 87.5L395.5 87.5M394.5 93.5L395.5 92.5M394.5 97.5L395.5 96.5M395.5 87.5L396.5 88.5M395.5 92.5L396.5 91.5M395.5 96.5L396.5 95.5M396.5 88.5L397.5 90.5M396.5 91.5L397.5 90.5M396.5 95.5L397.5 92.5M397.5 90.5L397.5 92.5M401.5 91.5L401.5 93.5M401.5 91.5L401.5 89.5M401.5 93.5L401.5 92.5M401.5 93.5L401.5 95.5M401.5 89.5L402.5 87.5M401.5 92.5L402.5 91.5M401.5 95.5L402.5 96.5M402.5 87.5L403.5 87.5M402.5 91.5L403.5 91.5M402.5 96.5L403.5 97.5M403.5 87.5L404.5 87.5M403.5 91.5L404.5 91.5M403.5 97.5L404.5 97.5M404.5 91.5L405.5 91.5M404.5 97.5L405.5 96.5M404.5 87.5L406.5 87.5M405.5 91.5L406.5 92.5M405.5 96.5L406.5 95.5M406.5 87.5L406.5 88.5M406.5 92.5L407.5 93.5M406.5 95.5L407.5 94.5M407.5 93.5L407.5 94.5M410.5 91.5L410.5 92.5M410.5 91.5L410.5 89.5M410.5 92.5L410.5 95.5M410.5 89.5L411.5 87.5M410.5 95.5L411.5 96.5M411.5 87.5L412.5 87.5M411.5 96.5L412.5 97.5M412.5 87.5L413.5 87.5M412.5 97.5L413.5 97.5M413.5 87.5L415.5 87.5M413.5 97.5L415.5 96.5M415.5 87.5L416.5 89.5M415.5 96.5L416.5 95.5M416.5 89.5L416.5 91.5M416.5 95.5L416.5 92.5M416.5 91.5L416.5 92.5M419.5 91.5L419.5 92.5M419.5 91.5L420.5 89.5M419.5 92.5L420.5 95.5M420.5 89.5L421.5 87.5M420.5 95.5L421.5 96.5M421.5 87.5L422.5 87.5M421.5 96.5L422.5 97.5M422.5 87.5L423.5 87.5M422.5 97.5L423.5 97.5M423.5 87.5L424.5 87.5M423.5 97.5L424.5 96.5M424.5 87.5L425.5 89.5M424.5 96.5L425.5 95.5M425.5 89.5L426.5 91.5M425.5 95.5L426.5 92.5M426.5 91.5L426.5 92.5" stroke="#ffffff" stroke-width="1.0" stroke-opacity="1.0" fill="none" stroke-linecap="square"/>
<path d="M505.5 90.5L505.5 90.5M505.5 90.5L506.5 88.5M505.5 90.5L506.5 91.5M506.5 88.5L507.5 87.5M506.5 91.5L507.5 92.5M506.5 95.5L506.5 96.5M506.5 96.5L508.5 97.5M507.5 87.5L508.5 87.5M507.5 92.5L508.5 93.5M508.5 97.5L509.5 97.5M508.5 87.5L509.5 87.5M508.5 93.5L509.5 93.5M509.5 87.5L510.5 87.5M509.5 93.5L510.5 92.5M509.5 97.5L510.5 96.5M510.5 87.5L511.5 88.5M510.5 92.5L511.5 91.5M510.5 96.5L511.5 95.5M511.5 88.5L511.5 90.5M511.5 91.5L511.5 90.5M511.5 95.5L511.5 92.5M511.5 90.5L511.5 92.5M515.5 87.5L521.5 87.5M517.5 97.5L517.5 96.5M517.5 97.5L521.5 88.5M517.5 97.5L521.5 87.5M517.5 96.5L521.5 88.5M517.5 96.5L521.5 87.5M521.5 88.5L521.5 87.5M524.5 91.5L524.5 92.5M524.5 91.5L525.5 89.5M524.5 92.5L525.5 95.5M525.5 89.5L526.5 87.5M525.5 95.5L526.5 96.5M526.5 87.5L527.5 87.5M526.5 96.5L527.5 97.5M527.5 87.5L528.5 87.5M527.5 97.5L528.5 97.5M528.5 87.5L530.5 87.5M528.5 97.5L530.5 96.5M530.5 87.5L530.5 89.5M530.5 96.5L530.5 95.5M530.5 89.5L531.5 91.5M530.5 95.5L531.5 92.5M531.5 91.5L531.5 92.5M534.5 91.5L534.5 92.5M534.5 91.5L534.5 89.5M534.5 92.5L534.5 95.5M534.5 89.5L535.5 87.5M534.5 95.5L535.5 96.5M535.5 87.5L537.5 87.5M535.5 96.5L537.5 97.5M537.5 87.5L538.5 87.5M537.5 97.5L538.5 97.5M538.5 87.5L539.5 87.5M538.5 97.5L539.5 96.5M539.5 87.5L540.5 89.5M539.5 96.5L540.5 95.5M540.5 89.5L540.5 91.5M540.5 95.5L540.5 92.5M540.5 91.5L540.5 92.5" stroke="#ffffff" stroke-width="1.0" stroke-opacity="1.0" fill="none" stroke-linecap="square"/>
<path d="M620.5 90.5L620.5 90.5M620.5 90.5L620.5 88.5M620.5 90.5L620.5 91.5M620.5 88.5L621.5 87.5M620.5 91.5L621.5 92.5M620.5 95.5L621.5 96.5M621.5 96.5L622.5 97.5M621.5 87.5L623.5 87.5M621.5 92.5L623.5 93.5M622.5 97.5L623.5 97.5M623.5 87.5L623.5 87.5M623.5 93.5L623.5 93.5M623.5 87.5L625.5 87.5M623.5 93.5L625.5 92.5M623.5 97.5L625.5 96.5M625.5 87.5L626.5 88.5M625.5 92.5L626.5 91.5M625.5 96.5L626.5 95.5M626.5 88.5L626.5 90.5M626.5 91.5L626.5 90.5M626.5 95.5L626.5 92.5M626.5 90.5L626.5 92.5M630.5 93.5L630.5 95.5M630.5 93.5L630.5 92.5M630.5 95.5L630.5 96.5M630.5 88.5L630.5 89.5M630.5 88.5L630.5 87.5M630.5 89.5L630.5 90.5M630.5 92.5L631.5 91.5M630.5 96.5L630.5 96.5M630.5 87.5L632.5 87.5M630.5 90.5L631.5 91.5M630.5 96.5L632.5 97.5M631.5 91.5L632.5 91.5M631.5 91.5L633.5 91.5M632.5 87.5L634.5 87.5M632.5 97.5L634.5 97.5M632.5 91.5L634.5 91.5M633.5 91.5L635.5 91.5M634.5 87.5L635.5 87.5M634.5 97.5L635.5 96.5M634.5 91.5L635.5 90.5M635.5 91.5L636.5 92.5M635.5 87.5L636.5 88.5M635.5 90.5L636.5 89.5M635.5 96.5L636.5 96.5M636.5 88.5L636.5 89.5M636.5 92.5L636.5 93.5M636.5 96.5L636.5 95.5M636.5 93.5L636.5 95.5M639.5 91.5L639.5 92.5M639.5 91.5L640.5 89.5M639.5 92.5L640.5 95.5M640.5 89.5L640.5 87.5M640.5 95.5L640.5 96.5M640.5 87.5L642.5 87.5M640.5 96.5L642.5 97.5M642.5 87.5L643.5 87.5M642.5 97.5L643.5 97.5M643.5 87.5L644.5 87.5M643.5 97.5L644.5 96.5M644.5 87.5L645.5 89.5M644.5 96.5L645.5 95.5M645.5 89.5L646.5 91.5M645.5 95.5L646.5 92.5M646.5 91.5L646.5 92.5M649.5 91.5L649.5 92.5M649.5 91.5L649.5 89.5M649.5 92.5L649.5 95.5M649.5 89.5L650.5 87.5M649.5 95.5L650.5 96.5M650.5 87.5L651.5 87.5M650.5 96.5L651.5 97.5M651.5 87.5L652.5 87.5M651.5 97.5L652.5 97.5M652.5 87.5L654.5 87.5M652.5 97.5L654.5 96.5M654.5 87.5L655.5 89.5M654.5 96.5L655.5 95.5M655.5 89.5L655.5 91.5M655.5 95.5L655.5 92.5M655.5 91.5L655.5 92.5" stroke="#ffffff" stroke-width="1.0" stroke-opacity="1.0" fill="none" stroke-linecap="square"/>
<path d="M735.5 90.5L735.5 90.5M735.5 90.5L735.5 88.5M735.5 90.5L735.5 91.5M735.5 88.5L736.5 87.5M735.5 91.5L736.5 92.5M735.5 95.5L736.5 96.5M736.5 96.5L737.5 97.5M736.5 87.5L738.5 87.5M736.5 92.5L738.5 93.5M737.5 97.5L738.5 97.5M738.5 87.5L738.5 87.5M738.5 93.5L738.5 93.5M738.5 87.5L739.5 87.5M738.5 93.5L739.5 92.5M738.5 97.5L739.5 96.5M739.5 87.5L740.5 88.5M739.5 92.5L740.5 91.5M739.5 96.5L740.5 95.5M740.5 88.5L741.5 90.5M740.5 91.5L741.5 90.5M740.5 95.5L741.5 92.5M741.5 90.5L741.5 92.5M744.5 90.5L744.5 90.5M744.5 90.5L745.5 88.5M744.5 90.5L745.5 91.5M745.5 88.5L746.5 87.5M745.5 91.5L746.5 92.5M745.5 95.5L745.5 96.5M745.5 96.5L747.5 97.5M746.5 87.5L747.5 87.5M746.5 92.5L747.5 93.5M747.5 97.5L748.5 97.5M747.5 87.5L748.5 87.5M747.5 93.5L748.5 93.5M748.5 87.5L749.5 87.5M748.5 93.5L749.5 92.5M748.5 97.5L749.5 96.5M749.5 87.5L750.5 88.5M749.5 92.5L750.5 91.5M749.5 96.5L750.5 95.5M750.5 88.5L750.5 90.5M750.5 91.5L750.5 90.5M750.5 95.5L750.5 92.5M750.5 90.5L750.5 92.5M754.5 91.5L754.5 92.5M754.5 91.5L754.5 89.5M754.5 92.5L754.5 95.5M754.5 89.5L755.5 87.5M754.5 95.5L755.5 96.5M755.5 87.5L757.5 87.5M755.5 96.5L757.5 97.5M757.5 87.5L758.5 87.5M757.5 97.5L758.5 97.5M758.5 87.5L759.5 87.5M758.5 97.5L759.5 96.5M759.5 87.5L760.5 89.5M759.5 96.5L760.5 95.5M760.5 89.5L760.5 91.5M760.5 95.5L760.5 92.5M760.5 91.5L760.5 92.5M763.5 91.5L763.5 92.5M763.5 91.5L764.5 89.5M763.5 92.5L764.5 95.5M764.5 89.5L765.5 87.5M764.5 95.5L765.5 96.5M765.5 87.5L766.5 87.5M765.5 96.5L766.5 97.5M766.5 87.5L767.5 87.5M766.5 97.5L767.5 97.5M767.5 87.5L769.5 87.5M767.5 97.5L769.5 96.5M769.5 87.5L769.5 89.5M769.5 96.5L769.5 95.5M769.5 89.5L770.5 91.5M769.5 95.5L770.5 92.5M770.5 91.5L770.5 92.5" stroke="#ffffff" stroke-width="1.0" stroke-opacity="1.0" fill="none" stroke-linecap="square"/>
<path d="M845.5 89.5L846.5 88.5M846.5 88.5L848.5 87.5M848.5 87.5L848.5 97.5M854.5 91.5L854.5 92.5M854.5 91.5L854.5 89.5M854.5 92.5L854.5 95.5M854.5 89.5L855.5 87.5M854.5 95.5L855.5 96.5M855.5 87.5L856.5 87.5M855.5 96.5L856.5 97.5M856.5 87.5L857.5 87.5M856.5 97.5L857.5 97.5M857.5 87.5L859.5 87.5M857.5 97.5L859.5 96.5M859.5 87.5L860.5 89.5M859.5 96.5L860.5 95.5M860.5 89.5L860.5 91.5M860.5 95.5L860.5 92.5M860.5 91.5L860.5 92.5M863.5 91.5L863.5 92.5M863.5 91.5L864.5 89.5M863.5 92.5L864.5 95.5M864.5 89.5L864.5 87.5M864.5 95.5L864.5 96.5M864.5 87.5L866.5 87.5M864.5 96.5L866.5 97.5M866.5 87.5L867.5 87.5M866.5 97.5L867.5 97.5M867.5 87.5L868.5 87.5M867.5 97.5L868.5 96.5M868.5 87.5L869.5 89.5M868.5 96.5L869.5 95.5M869.5 89.5L870.5 91.5M869.5 95.5L870.5 92.5M870.5 91.5L870.5 92.5M873.5 91.5L873.5 92.5M873.5 91.5L873.5 89.5M873.5 92.5L873.5 95.5M873.5 89.5L874.5 87.5M873.5 95.5L874.5 96.5M874.5 87.5L875.5 87.5M874.5 96.5L875.5 97.5M875.5 87.5L876.5 87.5M875.5 97.5L876.5 97.5M876.5 87.5L878.5 87.5M876.5 97.5L878.5 96.5M878.5 87.5L879.5 89.5M878.5 96.5L879.5 95.5M879.5 89.5L879.5 91.5M879.5 95.5L879.5 92.5M879.5 91.5L879.5 92.5M882.5 91.5L882.5 92.5M882.5 91.5L883.5 89.5M882.5 92.5L883.5 95.5M883.5 89.5L884.5 87.5M883.5 95.5L884.5 96.5M884.5 87.5L885.5 87.5M884.5 96.5L885.5 97.5M885.5 87.5L886.5 87.5M885.5 97.5L886.5 97.5M886.5 87.5L887.5 87.5M886.5 97.5L887.5 96.5M887.5 87.5L888.5 89.5M887.5 96.5L888.5 95.5M888.5 89.5L889.5 91.5M888.5 95.5L889.5 92.5M889.5 91.5L889.5 92.5" stroke="#ffffff" stroke-width="1.0" stroke-opacity="1.0" fill="none" stroke-linecap="square"/>
<path d="M960.5 89.5L961.5 88.5M961.5 88.5L963.5 87.5M963.5 87.5L963.5 97.5M968.5 91.5L968.5 92.5M968.5 91.5L969.5 89.5M968.5 92.5L969.5 95.5M969.5 89.5L970.5 87.5M969.5 95.5L970.5 96.5M970.5 87.5L971.5 87.5M970.5 96.5L971.5 97.5M971.5 87.5L972.5 87.5M971.5 97.5L972.5 97.5M972.5 87.5L973.5 87.5M972.5 97.5L973.5 96.5M973.5 87.5L974.5 89.5M973.5 96.5L974.5 95.5M974.5 89.5L975.5 91.5M974.5 95.5L975.5 92.5M975.5 91.5L975.5 92.5M979.5 89.5L980.5 88.5M980.5 88.5L982.5 87.5M982.5 87.5L982.5 97.5M987.5 91.5L987.5 92.5M987.5 91.5L988.5 89.5M987.5 92.5L988.5 95.5M988.5 89.5L989.5 87.5M988.5 95.5L989.5 96.5M989.5 87.5L990.5 87.5M989.5 96.5L990.5 97.5M990.5 87.5L991.5 87.5M990.5 97.5L991.5 97.5M991.5 87.5L993.5 87.5M991.5 97.5L993.5 96.5M993.5 87.5L993.5 89.5M993.5 96.5L993.5 95.5M993.5 89.5L994.5 91.5M993.5 95.5L994.5 92.5M994.5 91.5L994.5 92.5M997.5 91.5L997.5 92.5M997.5 91.5L997.5 89.5M997.5 92.5L997.5 95.5M997.5 89.5L998.5 87.5M997.5 95.5L998.5 96.5M998.5 87.5L1000.5 87.5M998.5 96.5L1000.5 97.5M1000.5 87.5L1001.5 87.5M1000.5 97.5L1001.5 97.5M1001.5 87.5L1002.5 87.5M1001.5 97.5L1002.5 96.5M1002.5 87.5L1003.5 89.5M1002.5 96.5L1003.5 95.5M1003.5 89.5L1003.5 91.5M1003.5 95.5L1003.5 92.5M1003.5 91.5L1003.5 92.5" stroke="#ffffff" stroke-width="1.0" stroke-opacity="1.0" fill="none" stroke-linecap="square"/>
<path d="M1075.5 89.5L1076.5 88.5M1076.5 88.5L1077.5 87.5M1077.5 87.5L1077.5 97.5M1083.5 91.5L1083.5 92.5M1083.5 91.5L1083.5 89.5M1083.5 92.5L1083.5 95.5M1083.5 89.5L1084.5 87.5M1083.5 95.5L1084.5 96.5M1084.5 87.5L1086.5 87.5M1084.5 96.5L1086.5 97.5M1086.5 87.5L1087.5 87.5M1086.5 97.5L1087.5 97.5M1087.5 87.5L1088.5 87.5M1087.5 97.5L1088.5 96.5M1088.5 87.5L1089.5 89.5M1088.5 96.5L1089.5 95.5M1089.5 89.5L1090.5 91.5M1089.5 95.5L1090.5 92.5M1090.5 91.5L1090.5 92.5M1093.5 97.5L1097.5 92.5M1093.5 97.5L1099.5 97.5M1093.5 89.5L1093.5 89.5M1093.5 89.5L1093.5 88.5M1093.5 88.5L1094.5 87.5M1094.5 87.5L1095.5 87.5M1095.5 87.5L1097.5 87.5M1097.5 87.5L1098.5 87.5M1097.5 92.5L1098.5 91.5M1098.5 87.5L1098.5 88.5M1098.5 88.5L1099.5 89.5M1098.5 91.5L1099.5 90.5M1099.5 89.5L1099.5 90.5M1102.5 91.5L1102.5 92.5M1102.5 91.5L1103.5 89.5M1102.5 92.5L1103.5 95.5M1103.5 89.5L1103.5 87.5M1103.5 95.5L1103.5 96.5M1103.5 87.5L1105.5 87.5M1103.5 96.5L1105.5 97.5M1105.5 87.5L1106.5 87.5M1105.5 97.5L1106.5 97.5M1106.5 87.5L1107.5 87.5M1106.5 97.5L1107.5 96.5M1107.5 87.5L1108.5 89.5M1107.5 96.5L1108.5 95.5M1108.5 89.5L1109.5 91.5M1108.5 95.5L1109.5 92.5M1109.5 91.5L1109.5 92.5M1112.5 91.5L1112.5 92.5M1112.5 91.5L1112.5 89.5M1112.5 92.5L1112.5 95.5M1112.5 89.5L1113.5 87.5M1112.5 95.5L1113.5 96.5M1113.5 87.5L1114.5 87.5M1113.5 96.5L1114.5 97.5M1114.5 87.5L1115.5 87.5M1114.5 97.5L1115.5 97.5M1115.5 87.5L1117.5 87.5M1115.5 97.5L1117.5 96.5M1117.5 87.5L1118.5 89.5M1117.5 96.5L1118.5 95.5M1118.5 89.5L1118.5 91.5M1118.5 95.5L1118.5 92.5M1118.5 91.5L1118.5 92.5" stroke="#ffffff" stroke-width="1.0" stroke-opacity="1.0" fill="none" stroke-linecap="square"/>
<path d="M1190.5 89.5L1191.5 88.5M1191.5 88.5L1192.5 87.5M1192.5 87.5L1192.5 97.5M1198.5 91.5L1198.5 92.5M1198.5 91.5L1198.5 89.5M1198.5 92.5L1198.5 95.5M1198.5 89.5L1199.5 87.5M1198.5 95.5L1199.5 96.5M1199.5 87.5L1201.5 87.5M1199.5 96.5L1201.5 97.5M1201.5 87.5L1202.5 87.5M1201.5 97.5L1202.5 97.5M1202.5 87.5L1203.5 87.5M1202.5 97.5L1203.5 96.5M1203.5 87.5L1204.5 89.5M1203.5 96.5L1204.5 95.5M1204.5 89.5L1204.5 91.5M1204.5 95.5L1204.5 92.5M1204.5 91.5L1204.5 92.5M1207.5 95.5L1208.5 96.5M1208.5 96.5L1208.5 96.5M1208.5 87.5L1213.5 87.5M1208.5 96.5L1210.5 97.5M1210.5 97.5L1211.5 97.5M1211.5 91.5L1212.5 91.5M1211.5 91.5L1213.5 87.5M1211.5 97.5L1212.5 96.5M1212.5 91.5L1213.5 91.5M1212.5 96.5L1213.5 95.5M1213.5 91.5L1213.5 91.5M1213.5 91.5L1214.5 93.5M1213.5 95.5L1214.5 94.5M1214.5 93.5L1214.5 94.5M1217.5 91.5L1217.5 92.5M1217.5 91.5L1217.5 89.5M1217.5 92.5L1217.5 95.5M1217.5 89.5L1218.5 87.5M1217.5 95.5L1218.5 96.5M1218.5 87.5L1220.5 87.5M1218.5 96.5L1220.5 97.5M1220.5 87.5L1221.5 87.5M1220.5 97.5L1221.5 97.5M1221.5 87.5L1222.5 87.5M1221.5 97.5L1222.5 96.5M1222.5 87.5L1223.5 89.5M1222.5 96.5L1223.5 95.5M1223.5 89.5L1223.5 91.5M1223.5 95.5L1223.5 92.5M1223.5 91.5L1223.5 92.5M1226.5 91.5L1226.5 92.5M1226.5 91.5L1227.5 89.5M1226.5 92.5L1227.5 95.5M1227.5 89.5L1228.5 87.5M1227.5 95.5L1228.5 96.5M1228.5 87.5L1229.5 87.5M1228.5 96.5L1229.5 97.5M1229.5 87.5L1230.5 87.5M1229.5 97.5L1230.5 97.5M1230.5 87.5L1232.5 87.5M1230.5 97.5L1232.5 96.5M1232.5 87.5L1232.5 89.5M1232.5 96.5L1232.5 95.5M1232.5 89.5L1233.5 91.5M1232.5 95.5L1233.5 92.5M1233.5 91.5L1233.5 92.5" stroke="#ffffff" stroke-width="1.0" stroke-opacity="1.0" fill="none" stroke-linecap="square"/>
<path d="M1304.5 89.5L1305.5 88.5M1305.5 88.5L1307.5 87.5M1307.5 87.5L1307.5 97.5M1312.5 91.5L1312.5 92.5M1312.5 91.5L1313.5 89.5M1312.5 92.5L1313.5 95.5M1313.5 89.5L1314.5 87.5M1313.5 95.5L1314.5 96.5M1314.5 87.5L1315.5 87.5M1314.5 96.5L1315.5 97.5M1315.5 87.5L1316.5 87.5M1315.5 97.5L1316.5 97.5M1316.5 87.5L1318.5 87.5M1316.5 97.5L1318.5 96.5M1318.5 87.5L1319.5 89.5M1318.5 96.5L1319.5 95.5M1319.5 89.5L1319.5 91.5M1319.5 95.5L1319.5 92.5M1319.5 91.5L1319.5 92.5M1322.5 93.5L1327.5 87.5M1322.5 93.5L1329.5 93.5M1327.5 87.5L1327.5 97.5M1332.5 91.5L1332.5 92.5M1332.5 91.5L1332.5 89.5M1332.5 92.5L1332.5 95.5M1332.5 89.5L1333.5 87.5M1332.5 95.5L1333.5 96.5M1333.5 87.5L1334.5 87.5M1333.5 96.5L1334.5 97.5M1334.5 87.5L1335.5 87.5M1334.5 97.5L1335.5 97.5M1335.5 87.5L1337.5 87.5M1335.5 97.5L1337.5 96.5M1337.5 87.5L1338.5 89.5M1337.5 96.5L1338.5 95.5M1338.5 89.5L1338.5 91.5M1338.5 95.5L1338.5 92.5M1338.5 91.5L1338.5 92.5M1341.5 91.5L1341.5 92.5M1341.5 91.5L1342.5 89.5M1341.5 92.5L1342.5 95.5M1342.5 89.5L1342.5 87.5M1342.5 95.5L1342.5 96.5M1342.5 87.5L1344.5 87.5M1342.5 96.5L1344.5 97.5M1344.5 87.5L1345.5 87.5M1344.5 97.5L1345.5 97.5M1345.5 87.5L1346.5 87.5M1345.5 97.5L1346.5 96.5M1346.5 87.5L1347.5 89.5M1346.5 96.5L1347.5 95.5M1347.5 89.5L1348.5 91.5M1347.5 95.5L1348.5 92.5M1348.5 91.5L1348.5 92.5" stroke="#ffffff" stroke-width="1.0" stroke-opacity="1.0" fill="none" stroke-linecap="square"/>
<path d="M1419.5 89.5L1420.5 88.5M1420.5 88.5L1421.5 87.5M1421.5 87.5L1421.5 97.5M1427.5 91.5L1427.5 92.5M1427.5 91.5L1428.5 89.5M1427.5 92.5L1428.5 95.5M1428.5 89.5L1429.5 87.5M1428.5 95.5L1429.5 96.5M1429.5 87.5L1430.5 87.5M1429.5 96.5L1430.5 97.5M1430.5 87.5L1431.5 87.5M1430.5 97.5L1431.5 97.5M1431.5 87.5L1432.5 87.5M1431.5 97.5L1432.5 96.5M1432.5 87.5L1433.5 89.5M1432.5 96.5L1433.5 95.5M1433.5 89.5L1434.5 91.5M1433.5 95.5L1434.5 92.5M1434.5 91.5L1434.5 92.5M1437.5 95.5L1437.5 96.5M1437.5 91.5L1438.5 87.5M1437.5 91.5L1438.5 91.5M1437.5 96.5L1438.5 96.5M1438.5 87.5L1442.5 87.5M1438.5 91.5L1439.5 90.5M1438.5 96.5L1439.5 97.5M1439.5 90.5L1441.5 90.5M1439.5 97.5L1441.5 97.5M1441.5 90.5L1442.5 91.5M1441.5 97.5L1442.5 96.5M1442.5 91.5L1443.5 91.5M1442.5 96.5L1443.5 95.5M1443.5 91.5L1443.5 93.5M1443.5 95.5L1443.5 94.5M1443.5 93.5L1443.5 94.5M1446.5 91.5L1446.5 92.5M1446.5 91.5L1447.5 89.5M1446.5 92.5L1447.5 95.5M1447.5 89.5L1448.5 87.5M1447.5 95.5L1448.5 96.5M1448.5 87.5L1449.5 87.5M1448.5 96.5L1449.5 97.5M1449.5 87.5L1450.5 87.5M1449.5 97.5L1450.5 97.5M1450.5 87.5L1451.5 87.5M1450.5 97.5L1451.5 96.5M1451.5 87.5L1452.5 89.5M1451.5 96.5L1452.5 95.5M1452.5 89.5L1453.5 91.5M1452.5 95.5L1453.5 92.5M1453.5 91.5L1453.5 92.5M1456.5 91.5L1456.5 92.5M1456.5 91.5L1456.5 89.5M1456.5 92.5L1456.5 95.5M1456.5 89.5L1457.5 87.5M1456.5 95.5L1457.5 96.5M1457.5 87.5L1459.5 87.5M1457.5 96.5L1459.5 97.5M1459.5 87.5L1460.5 87.5M1459.5 97.5L1460.5 97.5M1460.5 87.5L1461.5 87.5M1460.5 97.5L1461.5 96.5M1461.5 87.5L1462.5 89.5M1461.5 96.5L1462.5 95.5M1462.5 89.5L1462.5 91.5M1462.5 95.5L1462.5 92.5M1462.5 91.5L1462.5 92.5" stroke="#ffffff" stroke-width="1.0" stroke-opacity="1.0" fill="none" stroke-linecap="square"/>
<path d="M430.5 769.5L431.5 768.5M431.5 768.5L433.5 767.5M433.5 767.5L433.5 777.5M438.5 773.5L438.5 775.5M438.5 773.5L439.5 772.5M438.5 775.5L439.5 776.5M439.5 768.5L439.5 769.5M439.5 768.5L439.5 767.5M439.5 769.5L439.5 770.5M439.5 772.5L440.5 771.5M439.5 776.5L439.5 776.5M439.5 767.5L441.5 767.5M439.5 770.5L440.5 771.5M439.5 776.5L441.5 777.5M440.5 771.5L441.5 771.5M440.5 771.5L442.5 771.5M441.5 767.5L443.5 767.5M441.5 777.5L443.5 777.5M441.5 771.5L443.5 771.5M442.5 771.5L444.5 771.5M443.5 767.5L444.5 767.5M443.5 777.5L444.5 776.5M443.5 771.5L444.5 770.5M444.5 771.5L445.5 772.5M444.5 767.5L445.5 768.5M444.5 770.5L445.5 769.5M444.5 776.5L445.5 776.5M445.5 768.5L445.5 769.5M445.5 772.5L445.5 773.5M445.5 776.5L445.5 775.5M445.5 773.5L445.5 775.5M448.5 771.5L449.5 770.5M448.5 771.5L449.5 771.5M448.5 776.5L449.5 776.5M448.5 776.5L449.5 777.5M449.5 770.5L449.5 771.5M449.5 771.5L449.5 771.5M449.5 776.5L449.5 776.5M449.5 777.5L449.5 776.5M453.5 771.5L453.5 772.5M453.5 771.5L453.5 769.5M453.5 772.5L453.5 775.5M453.5 769.5L454.5 767.5M453.5 775.5L454.5 776.5M454.5 767.5L455.5 767.5M454.5 776.5L455.5 777.5M455.5 767.5L456.5 767.5M455.5 777.5L456.5 777.5M456.5 767.5L458.5 767.5M456.5 777.5L458.5 776.5M458.5 767.5L459.5 769.5M458.5 776.5L459.5 775.5M459.5 769.5L459.5 771.5M459.5 775.5L459.5 772.5M459.5 771.5L459.5 772.5M462.5 775.5L463.5 776.5M463.5 771.5L463.5 767.5M463.5 771.5L463.5 771.5M463.5 776.5L463.5 776.5M463.5 767.5L468.5 767.5M463.5 771.5L464.5 770.5M463.5 776.5L464.5 777.5M464.5 770.5L466.5 770.5M464.5 777.5L466.5 777.5M466.5 770.5L467.5 771.5M466.5 777.5L467.5 776.5M467.5 771.5L468.5 771.5M467.5 776.5L468.5 775.5M468.5 771.5L469.5 773.5M468.5 775.5L469.5 774.5M469.5 773.5L469.5 774.5" stroke="#ffffff" stroke-width="1.0" stroke-opacity="1.0" fill="none" stroke-linecap="square"/>
<path d="M775.5 769.5L776.5 768.5M776.5 768.5L777.5 767.5M777.5 767.5L777.5 777.5M783.5 773.5L783.5 775.5M783.5 773.5L783.5 772.5M783.5 775.5L783.5 776.5M783.5 768.5L783.5 769.5M783.5 768.5L784.5 767.5M783.5 769.5L784.5 770.5M783.5 772.5L784.5 771.5M783.5 776.5L784.5 776.5M784.5 767.5L785.5 767.5M784.5 770.5L785.5 771.5M784.5 776.5L785.5 777.5M784.5 771.5L786.5 771.5M785.5 771.5L786.5 771.5M785.5 767.5L787.5 767.5M785.5 777.5L787.5 777.5M786.5 771.5L787.5 771.5M786.5 771.5L788.5 771.5M787.5 767.5L788.5 767.5M787.5 777.5L788.5 776.5M787.5 771.5L788.5 770.5M788.5 771.5L789.5 772.5M788.5 767.5L789.5 768.5M788.5 770.5L789.5 769.5M788.5 776.5L789.5 776.5M789.5 768.5L789.5 769.5M789.5 772.5L789.5 773.5M789.5 776.5L789.5 775.5M789.5 773.5L789.5 775.5M793.5 771.5L793.5 770.5M793.5 771.5L793.5 771.5M793.5 776.5L793.5 776.5M793.5 776.5L793.5 777.5M793.5 770.5L794.5 771.5M793.5 771.5L794.5 771.5M793.5 776.5L794.5 776.5M793.5 777.5L794.5 776.5M798.5 769.5L799.5 768.5M799.5 768.5L801.5 767.5M801.5 767.5L801.5 777.5M806.5 771.5L806.5 772.5M806.5 771.5L807.5 769.5M806.5 772.5L807.5 775.5M807.5 769.5L808.5 767.5M807.5 775.5L808.5 776.5M808.5 767.5L809.5 767.5M808.5 776.5L809.5 777.5M809.5 767.5L810.5 767.5M809.5 777.5L810.5 777.5M810.5 767.5L812.5 767.5M810.5 777.5L812.5 776.5M812.5 767.5L813.5 769.5M812.5 776.5L813.5 775.5M813.5 769.5L813.5 771.5M813.5 775.5L813.5 772.5M813.5 771.5L813.5 772.5" stroke="#ffffff" stroke-width="1.0" stroke-opacity="1.0" fill="none" stroke-linecap="square"/>
<path d="M1119.5 769.5L1120.5 768.5M1120.5 768.5L1121.5 767.5M1121.5 767.5L1121.5 777.5M1127.5 773.5L1127.5 775.5M1127.5 773.5L1127.5 772.5M1127.5 775.5L1127.5 776.5M1127.5 768.5L1127.5 769.5M1127.5 768.5L1128.5 767.5M1127.5 769.5L1128.5 770.5M1127.5 772.5L1128.5 771.5M1127.5 776.5L1128.5 776.5M1128.5 767.5L1129.5 767.5M1128.5 770.5L1129.5 771.5M1128.5 776.5L1129.5 777.5M1128.5 771.5L1130.5 771.5M1129.5 771.5L1131.5 771.5M1129.5 767.5L1131.5 767.5M1129.5 777.5L1131.5 777.5M1130.5 771.5L1132.5 771.5M1131.5 771.5L1132.5 771.5M1131.5 767.5L1133.5 767.5M1131.5 777.5L1133.5 776.5M1132.5 771.5L1133.5 770.5M1132.5 771.5L1133.5 772.5M1133.5 767.5L1133.5 768.5M1133.5 770.5L1133.5 769.5M1133.5 776.5L1133.5 776.5M1133.5 768.5L1133.5 769.5M1133.5 772.5L1134.5 773.5M1133.5 776.5L1134.5 775.5M1134.5 773.5L1134.5 775.5M1137.5 771.5L1137.5 770.5M1137.5 771.5L1137.5 771.5M1137.5 776.5L1137.5 776.5M1137.5 776.5L1137.5 777.5M1137.5 770.5L1138.5 771.5M1137.5 771.5L1138.5 771.5M1137.5 776.5L1138.5 776.5M1137.5 777.5L1138.5 776.5M1143.5 769.5L1144.5 768.5M1144.5 768.5L1145.5 767.5M1145.5 767.5L1145.5 777.5M1151.5 775.5L1151.5 776.5M1151.5 771.5L1152.5 767.5M1151.5 771.5L1152.5 771.5M1151.5 776.5L1152.5 776.5M1152.5 767.5L1157.5 767.5M1152.5 771.5L1153.5 770.5M1152.5 776.5L1153.5 777.5M1153.5 770.5L1155.5 770.5M1153.5 777.5L1155.5 777.5M1155.5 770.5L1156.5 771.5M1155.5 777.5L1156.5 776.5M1156.5 771.5L1157.5 771.5M1156.5 776.5L1157.5 775.5M1157.5 771.5L1157.5 773.5M1157.5 775.5L1157.5 774.5M1157.5 773.5L1157.5 774.5" stroke="#ffffff" stroke-width="1.0" stroke-opacity="1.0" fill="none" stroke-linecap="square"/>
<path d="M1463.5 769.5L1464.5 768.5M1464.5 768.5L1466.5 767.5M1466.5 767.5L1466.5 777.5M1471.5 773.5L1471.5 775.5M1471.5 773.5L1472.5 772.5M1471.5 775.5L1472.5 776.5M1472.5 768.5L1472.5 769.5M1472.5 768.5L1472.5 767.5M1472.5 769.5L1472.5 770.5M1472.5 772.5L1473.5 771.5M1472.5 776.5L1472.5 776.5M1472.5 767.5L1474.5 767.5M1472.5 770.5L1473.5 771.5M1472.5 776.5L1474.5 777.5M1473.5 771.5L1474.5 771.5M1473.5 771.5L1475.5 771.5M1474.5 767.5L1476.5 767.5M1474.5 777.5L1476.5 777.5M1474.5 771.5L1476.5 771.5M1475.5 771.5L1477.5 771.5M1476.5 767.5L1477.5 767.5M1476.5 777.5L1477.5 776.5M1476.5 771.5L1477.5 770.5M1477.5 771.5L1478.5 772.5M1477.5 767.5L1478.5 768.5M1477.5 770.5L1478.5 769.5M1477.5 776.5L1478.5 776.5M1478.5 768.5L1478.5 769.5M1478.5 772.5L1478.5 773.5M1478.5 776.5L1478.5 775.5M1478.5 773.5L1478.5 775.5M1481.5 771.5L1482.5 770.5M1481.5 771.5L1482.5 771.5M1481.5 776.5L1482.5 776.5M1481.5 776.5L1482.5 777.5M1482.5 770.5L1482.5 771.5M1482.5 771.5L1482.5 771.5M1482.5 776.5L1482.5 776.5M1482.5 777.5L1482.5 776.5M1486.5 777.5L1490.5 772.5M1486.5 777.5L1492.5 777.5M1486.5 769.5L1486.5 769.5M1486.5 769.5L1487.5 768.5M1487.5 768.5L1487.5 767.5M1487.5 767.5L1488.5 767.5M1488.5 767.5L1490.5 767.5M1490.5 767.5L1491.5 767.5M1490.5 772.5L1491.5 771.5M1491.5 767.5L1491.5 768.5M1491.5 768.5L1492.5 769.5M1491.5 771.5L1492.5 770.5M1492.5 769.5L1492.5 770.5M1495.5 771.5L1495.5 772.5M1495.5 771.5L1496.5 769.5M1495.5 772.5L1496.5 775.5M1496.5 769.5L1497.5 767.5M1496.5 775.5L1497.5 776.5M1497.5 767.5L1498.5 767.5M1497.5 776.5L1498.5 777.5M1498.5 767.5L1499.5 767.5M1498.5 777.5L1499.5 777.5M1499.5 767.5L1500.5 767.5M1499.5 777.5L1500.5 776.5M1500.5 767.5L1501.5 769.5M1500.5 776.5L1501.5 775.5M1501.5 769.5L1502.5 771.5M1501.5 775.5L1502.5 772.5M1502.5 771.5L1502.5 772.5" stroke="#ffffff" stroke-width="1.0" stroke-opacity="1.0" fill="none" stroke-linecap="square"/>
<path d="M758.5 796.5L758.5 803.5M758.5 803.5L758.5 805.5M758.5 805.5L759.5 806.5M759.5 806.5L761.5 806.5M761.5 806.5L762.5 806.5M762.5 806.5L763.5 806.5M763.5 806.5L764.5 805.5M764.5 805.5L764.5 803.5M764.5 796.5L764.5 803.5M767.5 796.5L773.5 796.5M770.5 796.5L770.5 806.5M783.5 796.5L783.5 806.5M783.5 796.5L787.5 796.5M783.5 806.5L787.5 806.5M787.5 796.5L788.5 797.5M787.5 806.5L788.5 806.5M788.5 797.5L789.5 798.5M788.5 806.5L789.5 805.5M789.5 798.5L790.5 799.5M789.5 805.5L790.5 804.5M790.5 799.5L790.5 800.5M790.5 804.5L790.5 802.5M790.5 800.5L790.5 802.5M793.5 802.5L793.5 803.5M793.5 802.5L793.5 801.5M793.5 803.5L793.5 805.5M793.5 801.5L794.5 800.5M793.5 805.5L794.5 806.5M794.5 800.5L795.5 800.5M794.5 806.5L795.5 806.5M795.5 800.5L797.5 800.5M795.5 806.5L797.5 806.5M797.5 800.5L798.5 800.5M797.5 806.5L798.5 806.5M798.5 800.5L799.5 801.5M798.5 806.5L799.5 805.5M799.5 800.5L799.5 806.5M802.5 800.5L805.5 800.5M803.5 796.5L803.5 804.5M803.5 804.5L803.5 806.5M803.5 806.5L804.5 806.5M804.5 806.5L805.5 806.5M808.5 802.5L808.5 803.5M808.5 802.5L808.5 801.5M808.5 802.5L813.5 802.5M808.5 803.5L808.5 805.5M808.5 801.5L809.5 800.5M808.5 805.5L809.5 806.5M809.5 800.5L810.5 800.5M809.5 806.5L810.5 806.5M810.5 800.5L811.5 800.5M810.5 806.5L811.5 806.5M811.5 800.5L812.5 800.5M811.5 806.5L812.5 806.5M812.5 800.5L813.5 800.5M812.5 806.5L813.5 805.5M813.5 800.5L813.5 801.5M813.5 801.5L813.5 802.5M817.5 800.5L817.5 800.5M817.5 800.5L817.5 800.5M817.5 806.5L817.5 805.5M817.5 806.5L817.5 806.5M817.5 800.5L818.5 800.5M817.5 800.5L818.5 800.5M817.5 805.5L818.5 806.5M817.5 806.5L818.5 806.5M829.5 806.5L833.5 801.5M829.5 806.5L835.5 806.5M829.5 798.5L829.5 799.5M829.5 798.5L830.5 797.5M830.5 797.5L830.5 797.5M830.5 797.5L831.5 796.5M831.5 796.5L833.5 796.5M833.5 796.5L834.5 797.5M833.5 801.5L834.5 800.5M834.5 797.5L834.5 797.5M834.5 797.5L835.5 798.5M834.5 800.5L835.5 799.5M835.5 798.5L835.5 799.5M838.5 800.5L838.5 802.5M838.5 800.5L839.5 798.5M838.5 802.5L839.5 804.5M839.5 798.5L840.5 797.5M839.5 804.5L840.5 806.5M840.5 797.5L841.5 796.5M840.5 806.5L841.5 806.5M841.5 796.5L842.5 796.5M841.5 806.5L842.5 806.5M842.5 796.5L843.5 797.5M842.5 806.5L843.5 806.5M843.5 797.5L844.5 798.5M843.5 806.5L844.5 804.5M844.5 798.5L845.5 800.5M844.5 804.5L845.5 802.5M845.5 800.5L845.5 802.5M848.5 806.5L852.5 801.5M848.5 806.5L854.5 806.5M848.5 798.5L848.5 799.5M848.5 798.5L849.5 797.5M849.5 797.5L849.5 797.5M849.5 797.5L850.5 796.5M850.5 796.5L852.5 796.5M852.5 796.5L853.5 797.5M852.5 801.5L853.5 800.5M853.5 797.5L853.5 797.5M853.5 797.5L854.5 798.5M853.5 800.5L854.5 799.5M854.5 798.5L854.5 799.5M857.5 804.5L858.5 805.5M858.5 800.5L858.5 796.5M858.5 800.5L858.5 800.5M858.5 805.5L858.5 806.5M858.5 796.5L863.5 796.5M858.5 800.5L860.5 800.5M858.5 806.5L860.5 806.5M860.5 800.5L861.5 800.5M860.5 806.5L861.5 806.5M861.5 800.5L862.5 800.5M861.5 806.5L862.5 806.5M862.5 800.5L863.5 801.5M862.5 806.5L863.5 805.5M863.5 801.5L864.5 802.5M863.5 805.5L864.5 803.5M864.5 802.5L864.5 803.5M867.5 802.5L876.5 802.5M879.5 800.5L879.5 802.5M879.5 800.5L880.5 798.5M879.5 802.5L880.5 804.5M880.5 798.5L881.5 797.5M880.5 804.5L881.5 806.5M881.5 797.5L882.5 796.5M881.5 806.5L882.5 806.5M882.5 796.5L883.5 796.5M882.5 806.5L883.5 806.5M883.5 796.5L884.5 797.5M883.5 806.5L884.5 806.5M884.5 797.5L885.5 798.5M884.5 806.5L885.5 804.5M885.5 798.5L886.5 800.5M885.5 804.5L886.5 802.5M886.5 800.5L886.5 802.5M889.5 796.5L895.5 796.5M891.5 806.5L891.5 805.5M891.5 806.5L895.5 797.5M891.5 806.5L895.5 796.5M891.5 805.5L895.5 797.5M891.5 805.5L895.5 796.5M895.5 797.5L895.5 796.5M899.5 802.5L907.5 802.5M912.5 798.5L913.5 798.5M913.5 798.5L914.5 796.5M914.5 796.5L914.5 806.5M920.5 804.5L921.5 805.5M921.5 805.5L921.5 806.5M921.5 796.5L926.5 796.5M921.5 806.5L922.5 806.5M922.5 806.5L924.5 806.5M923.5 800.5L925.5 800.5M923.5 800.5L926.5 796.5M924.5 806.5L925.5 806.5M925.5 800.5L926.5 800.5M925.5 806.5L926.5 805.5M926.5 800.5L926.5 801.5M926.5 801.5L927.5 802.5M926.5 805.5L927.5 803.5M927.5 802.5L927.5 803.5" stroke="#ffffff" stroke-width="1.0" stroke-opacity="1.0" fill="none" stroke-linecap="square"/>
<path d="M171.5 193.5L173.5 193.5M171.5 193.5L169.5 192.5M173.5 193.5L175.5 192.5M169.5 192.5L168.5 191.5M175.5 192.5L176.5 191.5M168.5 191.5L167.5 190.5M176.5 191.5L177.5 190.5M167.5 190.5L167.5 189.5M177.5 190.5L177.5 189.5M167.5 189.5L168.5 188.5M177.5 189.5L176.5 188.5M168.5 188.5L169.5 187.5M176.5 188.5L175.5 187.5M169.5 187.5L171.5 186.5M175.5 187.5L173.5 186.5M171.5 186.5L173.5 186.5M176.5 183.5L176.5 183.5M176.5 183.5L177.5 183.5M176.5 183.5L176.5 182.5M177.5 183.5L176.5 182.5M171.5 179.5L173.5 179.5M171.5 179.5L169.5 178.5M173.5 179.5L175.5 178.5M169.5 178.5L168.5 178.5M175.5 178.5L176.5 178.5M168.5 178.5L167.5 176.5M176.5 178.5L177.5 176.5M167.5 176.5L167.5 175.5M177.5 176.5L177.5 175.5M167.5 175.5L168.5 174.5M177.5 175.5L176.5 174.5M168.5 174.5L169.5 173.5M176.5 174.5L175.5 173.5M169.5 173.5L171.5 172.5M175.5 173.5L173.5 172.5M171.5 172.5L173.5 172.5M177.5 170.5L172.5 165.5M177.5 170.5L177.5 163.5M169.5 169.5L170.5 169.5M169.5 169.5L168.5 169.5M168.5 169.5L168.5 168.5M168.5 168.5L167.5 167.5M167.5 167.5L167.5 166.5M167.5 166.5L168.5 165.5M172.5 165.5L171.5 164.5M168.5 165.5L168.5 164.5M168.5 164.5L169.5 164.5M171.5 164.5L170.5 164.5M169.5 164.5L170.5 164.5" stroke="#ffffff" stroke-width="1.0" stroke-opacity="1.0" fill="none" stroke-linecap="square"/>
<path d="M171.5 322.5L173.5 322.5M171.5 322.5L169.5 322.5M173.5 322.5L175.5 322.5M169.5 322.5L168.5 321.5M175.5 322.5L176.5 321.5M168.5 321.5L167.5 319.5M176.5 321.5L177.5 319.5M167.5 319.5L167.5 318.5M177.5 319.5L177.5 318.5M167.5 318.5L168.5 317.5M177.5 318.5L176.5 317.5M168.5 317.5L169.5 316.5M176.5 317.5L175.5 316.5M169.5 316.5L171.5 316.5M175.5 316.5L173.5 316.5M171.5 316.5L173.5 316.5M176.5 312.5L176.5 312.5M176.5 312.5L177.5 312.5M176.5 312.5L176.5 312.5M177.5 312.5L176.5 312.5M171.5 308.5L173.5 308.5M171.5 308.5L169.5 308.5M173.5 308.5L175.5 308.5M169.5 308.5L168.5 307.5M175.5 308.5L176.5 307.5M168.5 307.5L167.5 306.5M176.5 307.5L177.5 306.5M167.5 306.5L167.5 305.5M177.5 306.5L177.5 305.5M167.5 305.5L168.5 303.5M177.5 305.5L176.5 303.5M168.5 303.5L169.5 302.5M176.5 303.5L175.5 302.5M169.5 302.5L171.5 302.5M175.5 302.5L173.5 302.5M171.5 302.5L173.5 302.5M169.5 298.5L169.5 297.5M169.5 297.5L167.5 295.5M167.5 295.5L177.5 295.5" stroke="#ffffff" stroke-width="1.0" stroke-opacity="1.0" fill="none" stroke-linecap="square"/>
<path d="M171.5 443.5L173.5 443.5M171.5 443.5L169.5 442.5M173.5 443.5L175.5 442.5M169.5 442.5L168.5 441.5M175.5 442.5L176.5 441.5M168.5 441.5L167.5 440.5M176.5 441.5L177.5 440.5M167.5 440.5L167.5 439.5M177.5 440.5L177.5 439.5M167.5 439.5L168.5 438.5M177.5 439.5L176.5 438.5M168.5 438.5L169.5 437.5M176.5 438.5L175.5 437.5M169.5 437.5L171.5 436.5M175.5 437.5L173.5 436.5M171.5 436.5L173.5 436.5" stroke="#ffffff" stroke-width="1.0" stroke-opacity="1.0" fill="none" stroke-linecap="square"/>
<path d="M173.5 589.5L173.5 581.5M171.5 578.5L173.5 578.5M171.5 578.5L169.5 577.5M173.5 578.5L175.5 577.5M169.5 577.5L168.5 576.5M175.5 577.5L176.5 576.5M168.5 576.5L167.5 575.5M176.5 576.5L177.5 575.5M167.5 575.5L167.5 574.5M177.5 575.5L177.5 574.5M167.5 574.5L168.5 573.5M177.5 574.5L176.5 573.5M168.5 573.5L169.5 572.5M176.5 573.5L175.5 572.5M169.5 572.5L171.5 571.5M175.5 572.5L173.5 571.5M171.5 571.5L173.5 571.5M176.5 568.5L176.5 568.5M176.5 568.5L177.5 568.5M176.5 568.5L176.5 567.5M177.5 568.5L176.5 567.5M171.5 564.5L173.5 564.5M171.5 564.5L169.5 564.5M173.5 564.5L175.5 564.5M169.5 564.5L168.5 563.5M175.5 564.5L176.5 563.5M168.5 563.5L167.5 561.5M176.5 563.5L177.5 561.5M167.5 561.5L167.5 560.5M177.5 561.5L177.5 560.5M167.5 560.5L168.5 559.5M177.5 560.5L176.5 559.5M168.5 559.5L169.5 558.5M176.5 559.5L175.5 558.5M169.5 558.5L171.5 558.5M175.5 558.5L173.5 558.5M171.5 558.5L173.5 558.5M169.5 553.5L169.5 553.5M169.5 553.5L167.5 551.5M167.5 551.5L177.5 551.5" stroke="#ffffff" stroke-width="1.0" stroke-opacity="1.0" fill="none" stroke-linecap="square"/>
<path d="M173.5 721.5L173.5 713.5M171.5 710.5L173.5 710.5M171.5 710.5L169.5 710.5M173.5 710.5L175.5 710.5M169.5 710.5L168.5 709.5M175.5 710.5L176.5 709.5M168.5 709.5L167.5 707.5M176.5 709.5L177.5 707.5M167.5 707.5L167.5 706.5M177.5 707.5L177.5 706.5M167.5 706.5L168.5 705.5M177.5 706.5L176.5 705.5M168.5 705.5L169.5 704.5M176.5 705.5L175.5 704.5M169.5 704.5L171.5 704.5M175.5 704.5L173.5 704.5M171.5 704.5L173.5 704.5M176.5 700.5L176.5 700.5M176.5 700.5L177.5 700.5M176.5 700.5L176.5 699.5M177.5 700.5L176.5 699.5M171.5 696.5L173.5 696.5M171.5 696.5L169.5 696.5M173.5 696.5L175.5 696.5M169.5 696.5L168.5 695.5M175.5 696.5L176.5 695.5M168.5 695.5L167.5 693.5M176.5 695.5L177.5 693.5M167.5 693.5L167.5 692.5M177.5 693.5L177.5 692.5M167.5 692.5L168.5 691.5M177.5 692.5L176.5 691.5M168.5 691.5L169.5 690.5M176.5 691.5L175.5 690.5M169.5 690.5L171.5 690.5M175.5 690.5L173.5 690.5M171.5 690.5L173.5 690.5M177.5 687.5L172.5 682.5M177.5 687.5L177.5 681.5M169.5 687.5L170.5 687.5M169.5 687.5L168.5 686.5M168.5 686.5L168.5 686.5M168.5 686.5L167.5 685.5M167.5 685.5L167.5 683.5M167.5 683.5L168.5 682.5M172.5 682.5L171.5 681.5M168.5 682.5L168.5 681.5M168.5 681.5L169.5 681.5M171.5 681.5L170.5 681.5M169.5 681.5L170.5 681.5" stroke="#ffffff" stroke-width="1.0" stroke-opacity="1.0" fill="none" stroke-linecap="square"/>
<path d="M1506.5 746.5L1505.5 745.5M1505.5 745.5L1504.5 744.5M1504.5 744.5L1513.5 744.5M1508.5 738.5L1509.5 738.5M1508.5 738.5L1506.5 738.5M1509.5 738.5L1512.5 738.5M1506.5 738.5L1505.5 737.5M1512.5 738.5L1513.5 737.5M1505.5 737.5L1504.5 735.5M1513.5 737.5L1513.5 735.5M1504.5 735.5L1504.5 734.5M1513.5 735.5L1513.5 734.5M1504.5 734.5L1505.5 733.5M1513.5 734.5L1513.5 733.5M1505.5 733.5L1506.5 732.5M1513.5 733.5L1512.5 732.5M1506.5 732.5L1508.5 732.5M1512.5 732.5L1509.5 732.5M1508.5 732.5L1509.5 732.5M1508.5 729.5L1509.5 729.5M1508.5 729.5L1506.5 728.5M1509.5 729.5L1512.5 728.5M1506.5 728.5L1505.5 727.5M1512.5 728.5L1513.5 727.5M1505.5 727.5L1504.5 726.5M1513.5 727.5L1513.5 726.5M1504.5 726.5L1504.5 725.5M1513.5 726.5L1513.5 725.5M1504.5 725.5L1505.5 724.5M1513.5 725.5L1513.5 724.5M1505.5 724.5L1506.5 723.5M1513.5 724.5L1512.5 723.5M1506.5 723.5L1508.5 722.5M1512.5 723.5L1509.5 722.5M1508.5 722.5L1509.5 722.5" stroke="#ffffff" stroke-width="1.0" stroke-opacity="1.0" fill="none" stroke-linecap="square"/>
<path d="M1513.5 616.5L1509.5 611.5M1513.5 616.5L1513.5 609.5M1506.5 615.5L1506.5 615.5M1506.5 615.5L1505.5 615.5M1505.5 615.5L1505.5 614.5M1505.5 614.5L1504.5 613.5M1504.5 613.5L1504.5 612.5M1504.5 612.5L1505.5 611.5M1509.5 611.5L1508.5 610.5M1505.5 611.5L1505.5 610.5M1505.5 610.5L1506.5 610.5M1508.5 610.5L1507.5 610.5M1506.5 610.5L1507.5 610.5M1508.5 607.5L1509.5 607.5M1508.5 607.5L1506.5 606.5M1509.5 607.5L1512.5 606.5M1506.5 606.5L1505.5 605.5M1512.5 606.5L1513.5 605.5M1505.5 605.5L1504.5 604.5M1513.5 605.5L1513.5 604.5M1504.5 604.5L1504.5 603.5M1513.5 604.5L1513.5 603.5M1504.5 603.5L1505.5 601.5M1513.5 603.5L1513.5 601.5M1505.5 601.5L1506.5 601.5M1513.5 601.5L1512.5 601.5M1506.5 601.5L1508.5 600.5M1512.5 601.5L1509.5 600.5M1508.5 600.5L1509.5 600.5M1508.5 597.5L1509.5 597.5M1508.5 597.5L1506.5 597.5M1509.5 597.5L1512.5 597.5M1506.5 597.5L1505.5 596.5M1512.5 597.5L1513.5 596.5M1505.5 596.5L1504.5 595.5M1513.5 596.5L1513.5 595.5M1504.5 595.5L1504.5 594.5M1513.5 595.5L1513.5 594.5M1504.5 594.5L1505.5 592.5M1513.5 594.5L1513.5 592.5M1505.5 592.5L1506.5 591.5M1513.5 592.5L1512.5 591.5M1506.5 591.5L1508.5 591.5M1512.5 591.5L1509.5 591.5M1508.5 591.5L1509.5 591.5" stroke="#ffffff" stroke-width="1.0" stroke-opacity="1.0" fill="none" stroke-linecap="square"/>
<path d="M1512.5 485.5L1512.5 484.5M1512.5 484.5L1513.5 484.5M1504.5 484.5L1504.5 479.5M1513.5 484.5L1513.5 483.5M1513.5 483.5L1513.5 481.5M1508.5 482.5L1508.5 480.5M1508.5 482.5L1504.5 479.5M1513.5 481.5L1513.5 480.5M1508.5 480.5L1508.5 479.5M1513.5 480.5L1512.5 479.5M1508.5 479.5L1509.5 479.5M1509.5 479.5L1510.5 478.5M1512.5 479.5L1511.5 478.5M1510.5 478.5L1511.5 478.5M1508.5 476.5L1509.5 476.5M1508.5 476.5L1506.5 475.5M1509.5 476.5L1512.5 475.5M1506.5 475.5L1505.5 474.5M1512.5 475.5L1513.5 474.5M1505.5 474.5L1504.5 473.5M1513.5 474.5L1513.5 473.5M1504.5 473.5L1504.5 472.5M1513.5 473.5L1513.5 472.5M1504.5 472.5L1505.5 471.5M1513.5 472.5L1513.5 471.5M1505.5 471.5L1506.5 470.5M1513.5 471.5L1512.5 470.5M1506.5 470.5L1508.5 469.5M1512.5 470.5L1509.5 469.5M1508.5 469.5L1509.5 469.5M1508.5 467.5L1509.5 467.5M1508.5 467.5L1506.5 466.5M1509.5 467.5L1512.5 466.5M1506.5 466.5L1505.5 465.5M1512.5 466.5L1513.5 465.5M1505.5 465.5L1504.5 464.5M1513.5 465.5L1513.5 464.5M1504.5 464.5L1504.5 463.5M1513.5 464.5L1513.5 463.5M1504.5 463.5L1505.5 461.5M1513.5 463.5L1513.5 461.5M1505.5 461.5L1506.5 461.5M1513.5 461.5L1512.5 461.5M1506.5 461.5L1508.5 460.5M1512.5 461.5L1509.5 460.5M1508.5 460.5L1509.5 460.5" stroke="#ffffff" stroke-width="1.0" stroke-opacity="1.0" fill="none" stroke-linecap="square"/>
<path d="M1510.5 354.5L1504.5 350.5M1510.5 354.5L1510.5 347.5M1504.5 350.5L1513.5 350.5M1508.5 345.5L1509.5 345.5M1508.5 345.5L1506.5 344.5M1509.5 345.5L1512.5 344.5M1506.5 344.5L1505.5 344.5M1512.5 344.5L1513.5 344.5M1505.5 344.5L1504.5 342.5M1513.5 344.5L1513.5 342.5M1504.5 342.5L1504.5 341.5M1513.5 342.5L1513.5 341.5M1504.5 341.5L1505.5 340.5M1513.5 341.5L1513.5 340.5M1505.5 340.5L1506.5 339.5M1513.5 340.5L1512.5 339.5M1506.5 339.5L1508.5 338.5M1512.5 339.5L1509.5 338.5M1508.5 338.5L1509.5 338.5M1508.5 336.5L1509.5 336.5M1508.5 336.5L1506.5 335.5M1509.5 336.5L1512.5 335.5M1506.5 335.5L1505.5 334.5M1512.5 335.5L1513.5 334.5M1505.5 334.5L1504.5 333.5M1513.5 334.5L1513.5 333.5M1504.5 333.5L1504.5 332.5M1513.5 333.5L1513.5 332.5M1504.5 332.5L1505.5 331.5M1513.5 332.5L1513.5 331.5M1505.5 331.5L1506.5 330.5M1513.5 331.5L1512.5 330.5M1506.5 330.5L1508.5 329.5M1512.5 330.5L1509.5 329.5M1508.5 329.5L1509.5 329.5" stroke="#ffffff" stroke-width="1.0" stroke-opacity="1.0" fill="none" stroke-linecap="square"/>
<path d="M1512.5 223.5L1512.5 223.5M1508.5 223.5L1504.5 222.5M1508.5 223.5L1508.5 222.5M1512.5 223.5L1513.5 222.5M1504.5 222.5L1504.5 218.5M1508.5 222.5L1507.5 221.5M1513.5 222.5L1513.5 221.5M1507.5 221.5L1507.5 220.5M1513.5 221.5L1513.5 220.5M1507.5 220.5L1508.5 218.5M1513.5 220.5L1513.5 218.5M1508.5 218.5L1509.5 217.5M1513.5 218.5L1512.5 217.5M1509.5 217.5L1510.5 217.5M1512.5 217.5L1511.5 217.5M1510.5 217.5L1511.5 217.5M1508.5 214.5L1509.5 214.5M1508.5 214.5L1506.5 214.5M1509.5 214.5L1512.5 214.5M1506.5 214.5L1505.5 213.5M1512.5 214.5L1513.5 213.5M1505.5 213.5L1504.5 211.5M1513.5 213.5L1513.5 211.5M1504.5 211.5L1504.5 210.5M1513.5 211.5L1513.5 210.5M1504.5 210.5L1505.5 209.5M1513.5 210.5L1513.5 209.5M1505.5 209.5L1506.5 208.5M1513.5 209.5L1512.5 208.5M1506.5 208.5L1508.5 208.5M1512.5 208.5L1509.5 208.5M1508.5 208.5L1509.5 208.5M1508.5 205.5L1509.5 205.5M1508.5 205.5L1506.5 204.5M1509.5 205.5L1512.5 204.5M1506.5 204.5L1505.5 204.5M1512.5 204.5L1513.5 204.5M1505.5 204.5L1504.5 202.5M1513.5 204.5L1513.5 202.5M1504.5 202.5L1504.5 201.5M1513.5 202.5L1513.5 201.5M1504.5 201.5L1505.5 200.5M1513.5 201.5L1513.5 200.5M1505.5 200.5L1506.5 199.5M1513.5 200.5L1512.5 199.5M1506.5 199.5L1508.5 198.5M1512.5 199.5L1509.5 198.5M1508.5 198.5L1509.5 198.5" stroke="#ffffff" stroke-width="1.0" stroke-opacity="1.0" fill="none" stroke-linecap="square"/>
<path d="M144.5 531.5L154.5 531.5M144.5 531.5L144.5 525.5M148.5 531.5L148.5 528.5M147.5 523.5L154.5 523.5M150.5 523.5L148.5 522.5M148.5 522.5L147.5 522.5M147.5 522.5L147.5 521.5M147.5 521.5L147.5 519.5M150.5 517.5L151.5 517.5M150.5 517.5L148.5 517.5M150.5 517.5L150.5 512.5M151.5 517.5L152.5 517.5M148.5 517.5L147.5 516.5M152.5 517.5L153.5 516.5M147.5 516.5L147.5 515.5M153.5 516.5L154.5 515.5M147.5 515.5L147.5 514.5M154.5 515.5L154.5 514.5M147.5 514.5L147.5 513.5M154.5 514.5L153.5 513.5M147.5 513.5L148.5 512.5M153.5 513.5L152.5 512.5M148.5 512.5L149.5 512.5M149.5 512.5L150.5 512.5M150.5 509.5L151.5 509.5M150.5 509.5L148.5 508.5M151.5 509.5L152.5 508.5M148.5 508.5L147.5 507.5M152.5 508.5L153.5 507.5M147.5 507.5L147.5 506.5M153.5 507.5L154.5 506.5M147.5 506.5L147.5 505.5M154.5 506.5L154.5 505.5M147.5 505.5L147.5 504.5M154.5 505.5L153.5 504.5M147.5 504.5L148.5 503.5M153.5 504.5L152.5 503.5M147.5 503.5L157.5 503.5M147.5 499.5L152.5 499.5M152.5 499.5L153.5 499.5M153.5 499.5L154.5 498.5M154.5 498.5L154.5 497.5M154.5 497.5L153.5 496.5M153.5 496.5L152.5 494.5M147.5 494.5L154.5 494.5M150.5 491.5L151.5 491.5M150.5 491.5L148.5 490.5M150.5 491.5L150.5 485.5M151.5 491.5L152.5 490.5M148.5 490.5L147.5 490.5M152.5 490.5L153.5 490.5M147.5 490.5L147.5 489.5M153.5 490.5L154.5 489.5M147.5 489.5L147.5 487.5M154.5 489.5L154.5 487.5M147.5 487.5L147.5 486.5M154.5 487.5L153.5 486.5M147.5 486.5L148.5 486.5M153.5 486.5L152.5 485.5M148.5 486.5L149.5 485.5M149.5 485.5L150.5 485.5M147.5 482.5L154.5 482.5M149.5 482.5L147.5 481.5M147.5 481.5L147.5 480.5M147.5 480.5L147.5 478.5M147.5 478.5L147.5 477.5M147.5 477.5L149.5 477.5M149.5 477.5L154.5 477.5M150.5 474.5L151.5 474.5M150.5 474.5L148.5 473.5M151.5 474.5L152.5 473.5M148.5 473.5L147.5 472.5M152.5 473.5L153.5 472.5M147.5 472.5L147.5 471.5M153.5 472.5L154.5 471.5M147.5 471.5L147.5 470.5M154.5 471.5L154.5 470.5M147.5 470.5L147.5 469.5M154.5 470.5L153.5 469.5M147.5 469.5L148.5 468.5M153.5 469.5L152.5 468.5M157.5 466.5L157.5 465.5M147.5 465.5L154.5 463.5M157.5 465.5L156.5 465.5M156.5 465.5L156.5 464.5M156.5 464.5L154.5 463.5M154.5 463.5L147.5 460.5M149.5 449.5L149.5 441.5M150.5 430.5L144.5 425.5M150.5 430.5L150.5 423.5M144.5 425.5L154.5 425.5M152.5 421.5L153.5 420.5M153.5 420.5L153.5 420.5M144.5 420.5L144.5 415.5M153.5 420.5L154.5 418.5M154.5 418.5L154.5 417.5M147.5 417.5L147.5 416.5M147.5 417.5L144.5 415.5M154.5 417.5L153.5 416.5M147.5 416.5L148.5 415.5M153.5 416.5L152.5 415.5M148.5 415.5L148.5 415.5M148.5 415.5L150.5 414.5M152.5 415.5L151.5 414.5M150.5 414.5L151.5 414.5M144.5 411.5L144.5 405.5M154.5 409.5L153.5 409.5M154.5 409.5L145.5 405.5M154.5 409.5L144.5 405.5M153.5 409.5L145.5 405.5M153.5 409.5L144.5 405.5M145.5 405.5L144.5 405.5M153.5 401.5L153.5 401.5M153.5 401.5L154.5 401.5M153.5 401.5L153.5 401.5M154.5 401.5L153.5 401.5M150.5 397.5L144.5 392.5M150.5 397.5L150.5 390.5M144.5 392.5L154.5 392.5M146.5 388.5L147.5 388.5M146.5 388.5L145.5 387.5M147.5 388.5L148.5 387.5M145.5 387.5L144.5 386.5M148.5 387.5L149.5 386.5M152.5 387.5L153.5 387.5M153.5 387.5L154.5 385.5M144.5 386.5L144.5 385.5M149.5 386.5L150.5 385.5M154.5 385.5L154.5 384.5M144.5 385.5L144.5 384.5M150.5 385.5L150.5 384.5M144.5 384.5L144.5 383.5M150.5 384.5L149.5 383.5M154.5 384.5L153.5 383.5M144.5 383.5L145.5 382.5M149.5 383.5L148.5 382.5M153.5 383.5L152.5 382.5M145.5 382.5L147.5 382.5M148.5 382.5L147.5 382.5M152.5 382.5L149.5 382.5M147.5 382.5L149.5 382.5M150.5 378.5L144.5 374.5M150.5 378.5L150.5 371.5M144.5 374.5L154.5 374.5M144.5 361.5L154.5 361.5M144.5 361.5L147.5 360.5M144.5 361.5L150.5 359.5M144.5 361.5L154.5 357.5M147.5 360.5L150.5 359.5M147.5 360.5L154.5 357.5M150.5 359.5L154.5 357.5M154.5 357.5L150.5 356.5M154.5 357.5L147.5 355.5M154.5 357.5L144.5 353.5M150.5 356.5L147.5 355.5M150.5 356.5L144.5 353.5M147.5 355.5L144.5 353.5M144.5 353.5L154.5 353.5M144.5 350.5L154.5 350.5M148.5 350.5L148.5 343.5M144.5 343.5L154.5 343.5M147.5 340.5L147.5 335.5M154.5 340.5L151.5 338.5M154.5 340.5L149.5 336.5M154.5 340.5L147.5 335.5M154.5 340.5L154.5 335.5M151.5 338.5L149.5 336.5M151.5 338.5L147.5 335.5M149.5 336.5L147.5 335.5" stroke="#ffffff" stroke-width="1.0" stroke-opacity="1.0" fill="none" stroke-linecap="square"/>
<path d="M583.5 97.5L588.5 91.5M583.5 97.5L590.5 97.5M588.5 91.5L588.5 101.5M593.5 99.5L593.5 100.5M593.5 100.5L594.5 100.5M594.5 91.5L599.5 91.5M594.5 100.5L595.5 101.5M595.5 101.5L596.5 101.5M596.5 95.5L597.5 95.5M596.5 95.5L599.5 91.5M596.5 101.5L598.5 100.5M597.5 95.5L598.5 95.5M598.5 100.5L599.5 99.5M598.5 95.5L599.5 95.5M599.5 95.5L599.5 97.5M599.5 99.5L599.5 98.5M599.5 97.5L599.5 98.5M603.5 95.5L603.5 97.5M603.5 95.5L603.5 93.5M603.5 97.5L603.5 96.5M603.5 97.5L603.5 99.5M603.5 93.5L604.5 91.5M603.5 96.5L604.5 95.5M603.5 99.5L604.5 100.5M604.5 91.5L605.5 91.5M604.5 95.5L605.5 95.5M604.5 100.5L605.5 101.5M605.5 91.5L606.5 91.5M605.5 95.5L606.5 95.5M605.5 101.5L606.5 101.5M606.5 95.5L607.5 95.5M606.5 101.5L607.5 100.5M606.5 91.5L608.5 91.5M607.5 95.5L608.5 96.5M607.5 100.5L608.5 99.5M608.5 91.5L608.5 92.5M608.5 96.5L609.5 97.5M608.5 99.5L609.5 98.5M609.5 97.5L609.5 98.5M612.5 91.5L618.5 91.5M614.5 101.5L614.5 100.5M614.5 101.5L618.5 92.5M614.5 101.5L618.5 91.5M614.5 100.5L618.5 92.5M614.5 100.5L618.5 91.5M618.5 92.5L618.5 91.5M621.5 91.5L628.5 91.5M623.5 101.5L624.5 100.5M623.5 101.5L627.5 92.5M623.5 101.5L628.5 91.5M624.5 100.5L627.5 92.5M624.5 100.5L628.5 91.5M627.5 92.5L628.5 91.5M639.5 96.5L647.5 96.5M657.5 91.5L664.5 91.5M661.5 91.5L661.5 101.5M666.5 91.5L666.5 101.5M666.5 91.5L673.5 91.5M666.5 95.5L670.5 95.5M666.5 101.5L673.5 101.5M675.5 91.5L675.5 101.5M675.5 91.5L682.5 101.5M682.5 91.5L682.5 101.5M686.5 96.5L694.5 96.5M698.5 91.5L698.5 101.5M698.5 97.5L705.5 91.5M701.5 95.5L705.5 101.5M708.5 95.5L708.5 97.5M708.5 95.5L708.5 93.5M708.5 97.5L708.5 98.5M708.5 93.5L709.5 92.5M708.5 98.5L709.5 99.5M709.5 92.5L710.5 91.5M709.5 99.5L710.5 100.5M710.5 91.5L711.5 91.5M710.5 100.5L711.5 101.5M711.5 91.5L713.5 91.5M711.5 101.5L713.5 101.5M713.5 91.5L714.5 91.5M713.5 101.5L714.5 100.5M714.5 91.5L714.5 92.5M714.5 100.5L714.5 99.5M714.5 92.5L715.5 93.5M714.5 99.5L715.5 98.5M715.5 93.5L715.5 95.5M715.5 98.5L715.5 97.5M715.5 95.5L715.5 97.5M719.5 91.5L719.5 101.5M719.5 95.5L725.5 95.5M725.5 91.5L725.5 101.5" stroke="#00ff00" stroke-width="1.0" stroke-opacity="1.0" fill="none" stroke-linecap="square"/>
<path d="M346.5 225.5L346.5 226.5M346.5 221.5L346.5 217.5M346.5 221.5L346.5 221.5M346.5 226.5L346.5 227.5M346.5 217.5L351.5 217.5M346.5 221.5L348.5 221.5M346.5 227.5L348.5 227.5M348.5 221.5L349.5 221.5M348.5 227.5L349.5 227.5M349.5 221.5L351.5 221.5M349.5 227.5L351.5 227.5M351.5 221.5L352.5 222.5M351.5 227.5L352.5 226.5M352.5 222.5L352.5 223.5M352.5 226.5L352.5 224.5M352.5 223.5L352.5 224.5M356.5 219.5L357.5 219.5M357.5 219.5L359.5 217.5M359.5 217.5L359.5 227.5M365.5 221.5L365.5 224.5M365.5 221.5L365.5 219.5M365.5 224.5L365.5 222.5M365.5 224.5L365.5 226.5M365.5 219.5L366.5 218.5M365.5 222.5L366.5 221.5M365.5 226.5L366.5 227.5M366.5 218.5L368.5 217.5M366.5 221.5L368.5 221.5M366.5 227.5L368.5 227.5M368.5 217.5L369.5 217.5M368.5 221.5L368.5 221.5M368.5 227.5L368.5 227.5M368.5 221.5L370.5 221.5M368.5 227.5L370.5 227.5M369.5 217.5L370.5 218.5M370.5 221.5L371.5 222.5M370.5 227.5L371.5 226.5M370.5 218.5L371.5 219.5M371.5 222.5L371.5 224.5M371.5 226.5L371.5 224.5M371.5 224.5L371.5 224.5M374.5 225.5L375.5 226.5M375.5 221.5L375.5 217.5M375.5 221.5L375.5 221.5M375.5 226.5L375.5 227.5M375.5 217.5L380.5 217.5M375.5 221.5L376.5 221.5M375.5 227.5L376.5 227.5M376.5 221.5L378.5 221.5M376.5 227.5L378.5 227.5M378.5 221.5L379.5 221.5M378.5 227.5L379.5 227.5M379.5 221.5L380.5 222.5M379.5 227.5L380.5 226.5M380.5 222.5L381.5 223.5M380.5 226.5L381.5 224.5M381.5 223.5L381.5 224.5M384.5 217.5L390.5 217.5M385.5 227.5L386.5 226.5M385.5 227.5L390.5 218.5M385.5 227.5L390.5 217.5M386.5 226.5L390.5 218.5M386.5 226.5L390.5 217.5M390.5 218.5L390.5 217.5M401.5 223.5L410.5 223.5M421.5 217.5L421.5 227.5M425.5 217.5L425.5 227.5M425.5 217.5L432.5 227.5M432.5 217.5L432.5 227.5M435.5 219.5L435.5 220.5M435.5 219.5L436.5 218.5M435.5 220.5L435.5 221.5M435.5 226.5L436.5 227.5M435.5 221.5L436.5 221.5M436.5 218.5L437.5 217.5M436.5 221.5L437.5 221.5M436.5 227.5L437.5 227.5M437.5 221.5L440.5 222.5M437.5 217.5L439.5 217.5M437.5 227.5L439.5 227.5M439.5 217.5L441.5 218.5M439.5 227.5L441.5 227.5M440.5 222.5L441.5 223.5M441.5 218.5L442.5 219.5M441.5 223.5L441.5 223.5M441.5 227.5L442.5 226.5M441.5 223.5L442.5 224.5M442.5 224.5L442.5 226.5M445.5 217.5L445.5 227.5M445.5 217.5L449.5 217.5M445.5 222.5L449.5 222.5M449.5 217.5L451.5 218.5M449.5 222.5L451.5 222.5M451.5 218.5L451.5 218.5M451.5 222.5L451.5 221.5M451.5 218.5L452.5 219.5M451.5 221.5L452.5 221.5M452.5 219.5L452.5 221.5M455.5 217.5L455.5 227.5M459.5 217.5L459.5 227.5M459.5 217.5L463.5 217.5M459.5 222.5L463.5 222.5M462.5 222.5L463.5 223.5M462.5 222.5L465.5 227.5M463.5 217.5L465.5 218.5M463.5 222.5L465.5 221.5M465.5 218.5L465.5 218.5M465.5 221.5L465.5 221.5M465.5 226.5L465.5 227.5M465.5 218.5L465.5 219.5M465.5 221.5L465.5 220.5M465.5 219.5L465.5 220.5M469.5 217.5L469.5 227.5M469.5 217.5L475.5 217.5M469.5 222.5L473.5 222.5M469.5 227.5L475.5 227.5M477.5 219.5L477.5 220.5M477.5 219.5L478.5 218.5M477.5 220.5L478.5 221.5M477.5 226.5L478.5 227.5M478.5 221.5L478.5 221.5M478.5 218.5L480.5 217.5M478.5 221.5L479.5 221.5M478.5 227.5L480.5 227.5M479.5 221.5L482.5 222.5M480.5 217.5L482.5 217.5M480.5 227.5L482.5 227.5M482.5 217.5L483.5 218.5M482.5 227.5L483.5 227.5M482.5 222.5L483.5 223.5M483.5 218.5L484.5 219.5M483.5 223.5L484.5 223.5M483.5 227.5L484.5 226.5M484.5 223.5L484.5 224.5M484.5 224.5L484.5 226.5M486.5 227.5L487.5 223.5M486.5 227.5L488.5 221.5M486.5 227.5L490.5 217.5M487.5 223.5L488.5 221.5M487.5 223.5L490.5 217.5M487.5 224.5L492.5 224.5M488.5 221.5L490.5 217.5M490.5 217.5L491.5 221.5M490.5 217.5L492.5 223.5M490.5 217.5L494.5 227.5M491.5 221.5L492.5 223.5M491.5 221.5L494.5 227.5M492.5 223.5L494.5 227.5M494.5 217.5L501.5 217.5M498.5 217.5L498.5 227.5M504.5 223.5L512.5 223.5M517.5 219.5L518.5 219.5M518.5 219.5L519.5 217.5M519.5 217.5L519.5 227.5" stroke="#00ff00" stroke-width="1.0" stroke-opacity="1.0" fill="none" stroke-linecap="square"/>
<path d="M841.5 250.5L841.5 251.5M841.5 246.5L842.5 242.5M841.5 246.5L842.5 246.5M841.5 251.5L842.5 252.5M842.5 242.5L847.5 242.5M842.5 246.5L843.5 246.5M842.5 252.5L843.5 252.5M843.5 246.5L845.5 246.5M843.5 252.5L845.5 252.5M845.5 246.5L846.5 246.5M845.5 252.5L846.5 252.5M846.5 246.5L847.5 247.5M846.5 252.5L847.5 251.5M847.5 247.5L848.5 248.5M847.5 251.5L848.5 249.5M848.5 248.5L848.5 249.5M851.5 250.5L851.5 251.5M851.5 251.5L851.5 252.5M851.5 242.5L857.5 242.5M851.5 252.5L853.5 252.5M853.5 252.5L854.5 252.5M854.5 246.5L855.5 246.5M854.5 246.5L857.5 242.5M854.5 252.5L856.5 252.5M855.5 246.5L856.5 246.5M856.5 252.5L857.5 251.5M856.5 246.5L857.5 247.5M857.5 247.5L857.5 248.5M857.5 251.5L857.5 249.5M857.5 248.5L857.5 249.5M860.5 249.5L860.5 250.5M860.5 249.5L861.5 248.5M860.5 250.5L861.5 251.5M861.5 244.5L861.5 245.5M861.5 244.5L861.5 243.5M861.5 245.5L861.5 246.5M861.5 248.5L861.5 247.5M861.5 251.5L861.5 252.5M861.5 243.5L862.5 242.5M861.5 246.5L862.5 246.5M861.5 252.5L862.5 252.5M861.5 247.5L863.5 246.5M862.5 246.5L864.5 246.5M862.5 242.5L864.5 242.5M862.5 252.5L864.5 252.5M863.5 246.5L865.5 246.5M864.5 246.5L865.5 247.5M864.5 242.5L866.5 243.5M864.5 252.5L866.5 252.5M865.5 246.5L866.5 246.5M865.5 247.5L866.5 248.5M866.5 243.5L866.5 244.5M866.5 246.5L866.5 245.5M866.5 252.5L866.5 251.5M866.5 244.5L866.5 245.5M866.5 248.5L867.5 249.5M866.5 251.5L867.5 250.5M867.5 249.5L867.5 250.5M870.5 246.5L870.5 248.5M870.5 246.5L870.5 244.5M870.5 248.5L870.5 250.5M870.5 244.5L871.5 243.5M870.5 250.5L871.5 252.5M871.5 243.5L872.5 242.5M871.5 252.5L872.5 252.5M872.5 242.5L873.5 242.5M872.5 252.5L873.5 252.5M873.5 242.5L875.5 243.5M873.5 252.5L875.5 252.5M875.5 243.5L876.5 244.5M875.5 252.5L876.5 250.5M876.5 244.5L876.5 246.5M876.5 250.5L876.5 248.5M876.5 246.5L876.5 248.5M879.5 242.5L886.5 242.5M881.5 252.5L881.5 251.5M881.5 252.5L885.5 243.5M881.5 252.5L886.5 242.5M881.5 251.5L885.5 243.5M881.5 251.5L886.5 242.5M885.5 243.5L886.5 242.5M897.5 248.5L905.5 248.5M917.5 242.5L917.5 252.5M917.5 242.5L921.5 242.5M917.5 247.5L921.5 247.5M917.5 252.5L921.5 252.5M921.5 242.5L922.5 243.5M921.5 247.5L922.5 246.5M921.5 247.5L922.5 247.5M921.5 252.5L922.5 252.5M922.5 243.5L923.5 243.5M922.5 246.5L923.5 246.5M922.5 247.5L923.5 248.5M922.5 252.5L923.5 251.5M923.5 243.5L923.5 244.5M923.5 246.5L923.5 245.5M923.5 248.5L923.5 249.5M923.5 251.5L923.5 250.5M923.5 244.5L923.5 245.5M923.5 249.5L923.5 250.5M927.5 242.5L927.5 252.5M927.5 252.5L932.5 252.5M935.5 242.5L935.5 249.5M935.5 249.5L935.5 251.5M935.5 251.5L936.5 252.5M936.5 252.5L938.5 252.5M938.5 252.5L939.5 252.5M939.5 252.5L940.5 252.5M940.5 252.5L941.5 251.5M941.5 251.5L941.5 249.5M941.5 242.5L941.5 249.5M945.5 242.5L945.5 252.5M945.5 242.5L951.5 242.5M945.5 247.5L949.5 247.5M945.5 252.5L951.5 252.5M953.5 242.5L954.5 244.5M953.5 242.5L955.5 250.5M953.5 242.5L956.5 252.5M954.5 244.5L955.5 250.5M954.5 244.5L956.5 252.5M955.5 250.5L956.5 252.5M956.5 252.5L956.5 250.5M956.5 252.5L958.5 244.5M956.5 252.5L958.5 242.5M956.5 250.5L958.5 244.5M956.5 250.5L958.5 242.5M958.5 244.5L958.5 242.5M958.5 242.5L959.5 244.5M958.5 242.5L960.5 250.5M958.5 242.5L960.5 252.5M959.5 244.5L960.5 250.5M959.5 244.5L960.5 252.5M960.5 250.5L960.5 252.5M960.5 252.5L961.5 250.5M960.5 252.5L962.5 244.5M960.5 252.5L963.5 242.5M961.5 250.5L962.5 244.5M961.5 250.5L963.5 242.5M962.5 244.5L963.5 242.5M964.5 252.5L966.5 248.5M964.5 252.5L967.5 246.5M964.5 252.5L968.5 242.5M966.5 248.5L967.5 246.5M966.5 248.5L968.5 242.5M966.5 249.5L970.5 249.5M967.5 246.5L968.5 242.5M968.5 242.5L970.5 246.5M968.5 242.5L970.5 248.5M968.5 242.5L972.5 252.5M970.5 246.5L970.5 248.5M970.5 246.5L972.5 252.5M970.5 248.5L972.5 252.5M974.5 242.5L974.5 252.5M974.5 252.5L980.5 252.5M982.5 242.5L982.5 252.5M982.5 249.5L989.5 242.5M985.5 246.5L989.5 252.5M992.5 242.5L992.5 252.5M992.5 242.5L999.5 242.5M992.5 247.5L996.5 247.5M992.5 252.5L999.5 252.5M1001.5 242.5L1001.5 252.5M1001.5 242.5L1006.5 242.5M1001.5 247.5L1006.5 247.5M1005.5 247.5L1006.5 248.5M1005.5 247.5L1008.5 252.5M1006.5 242.5L1007.5 243.5M1006.5 247.5L1007.5 246.5M1007.5 243.5L1008.5 243.5M1007.5 246.5L1008.5 246.5M1007.5 251.5L1008.5 252.5M1008.5 243.5L1008.5 244.5M1008.5 246.5L1008.5 245.5M1008.5 244.5L1008.5 245.5M1019.5 250.5L1019.5 251.5M1019.5 251.5L1020.5 252.5M1020.5 242.5L1025.5 242.5M1020.5 252.5L1021.5 252.5M1021.5 252.5L1022.5 252.5M1022.5 246.5L1023.5 246.5M1022.5 246.5L1025.5 242.5M1022.5 252.5L1024.5 252.5M1023.5 246.5L1024.5 246.5M1024.5 252.5L1025.5 251.5M1024.5 246.5L1025.5 247.5M1025.5 247.5L1025.5 248.5M1025.5 251.5L1025.5 249.5M1025.5 248.5L1025.5 249.5" stroke="#00ff00" stroke-width="1.0" stroke-opacity="1.0" fill="none" stroke-linecap="square"/>
<path d="M434.5 578.5L439.5 571.5M434.5 578.5L441.5 578.5M439.5 571.5L439.5 581.5M444.5 579.5L444.5 580.5M444.5 580.5L445.5 581.5M445.5 571.5L450.5 571.5M445.5 581.5L446.5 581.5M446.5 581.5L448.5 581.5M447.5 575.5L448.5 575.5M447.5 575.5L450.5 571.5M448.5 581.5L449.5 581.5M448.5 575.5L449.5 575.5M449.5 581.5L450.5 580.5M449.5 575.5L450.5 576.5M450.5 576.5L450.5 577.5M450.5 580.5L450.5 578.5M450.5 577.5L450.5 578.5M453.5 571.5L460.5 571.5M455.5 581.5L456.5 580.5M455.5 581.5L459.5 572.5M455.5 581.5L460.5 571.5M456.5 580.5L459.5 572.5M456.5 580.5L460.5 571.5M459.5 572.5L460.5 571.5M463.5 571.5L469.5 571.5M465.5 581.5L465.5 580.5M465.5 581.5L469.5 572.5M465.5 581.5L469.5 571.5M465.5 580.5L469.5 572.5M465.5 580.5L469.5 571.5M469.5 572.5L469.5 571.5M472.5 579.5L473.5 580.5M473.5 580.5L473.5 581.5M473.5 571.5L478.5 571.5M473.5 581.5L475.5 581.5M475.5 581.5L476.5 581.5M476.5 575.5L477.5 575.5M476.5 575.5L478.5 571.5M476.5 581.5L478.5 581.5M477.5 575.5L478.5 575.5M478.5 581.5L478.5 580.5M478.5 575.5L478.5 576.5M478.5 576.5L479.5 577.5M478.5 580.5L479.5 578.5M479.5 577.5L479.5 578.5M490.5 577.5L498.5 577.5M510.5 571.5L510.5 581.5M510.5 571.5L514.5 571.5M510.5 576.5L514.5 576.5M513.5 576.5L514.5 577.5M513.5 576.5L517.5 581.5M514.5 571.5L516.5 572.5M514.5 576.5L516.5 575.5M516.5 572.5L516.5 572.5M516.5 575.5L516.5 575.5M516.5 580.5L517.5 581.5M516.5 572.5L517.5 573.5M516.5 575.5L517.5 574.5M517.5 573.5L517.5 574.5M518.5 581.5L520.5 577.5M518.5 581.5L521.5 575.5M518.5 581.5L522.5 571.5M520.5 577.5L521.5 575.5M520.5 577.5L522.5 571.5M520.5 578.5L525.5 578.5M521.5 575.5L522.5 571.5M522.5 571.5L524.5 575.5M522.5 571.5L525.5 577.5M522.5 571.5L526.5 581.5M524.5 575.5L525.5 577.5M524.5 575.5L526.5 581.5M525.5 577.5L526.5 581.5M528.5 571.5L528.5 581.5M528.5 571.5L535.5 581.5M535.5 571.5L535.5 581.5M538.5 575.5L538.5 577.5M538.5 575.5L539.5 574.5M538.5 577.5L539.5 579.5M539.5 574.5L539.5 573.5M539.5 579.5L539.5 580.5M539.5 573.5L540.5 572.5M539.5 580.5L540.5 581.5M540.5 572.5L541.5 571.5M540.5 581.5L541.5 581.5M541.5 571.5L543.5 571.5M541.5 581.5L543.5 581.5M543.5 571.5L544.5 572.5M543.5 577.5L546.5 577.5M543.5 581.5L544.5 581.5M544.5 572.5L545.5 573.5M544.5 581.5L545.5 580.5M545.5 573.5L546.5 574.5M545.5 580.5L546.5 579.5M546.5 577.5L546.5 579.5M549.5 571.5L549.5 581.5M549.5 571.5L555.5 571.5M549.5 576.5L553.5 576.5M549.5 581.5L555.5 581.5M558.5 577.5L567.5 577.5M569.5 581.5L570.5 577.5M569.5 581.5L571.5 575.5M569.5 581.5L573.5 571.5M570.5 577.5L571.5 575.5M570.5 577.5L573.5 571.5M570.5 578.5L575.5 578.5M571.5 575.5L573.5 571.5M573.5 571.5L574.5 575.5M573.5 571.5L575.5 577.5M573.5 571.5L577.5 581.5M574.5 575.5L575.5 577.5M574.5 575.5L577.5 581.5M575.5 577.5L577.5 581.5" stroke="#00ff00" stroke-width="1.0" stroke-opacity="1.0" fill="none" stroke-linecap="square"/>
<path d="M1394.5 643.5L1399.5 638.5M1394.5 643.5L1401.5 643.5M1394.5 635.5L1394.5 636.5M1394.5 635.5L1395.5 634.5M1395.5 634.5L1395.5 634.5M1395.5 634.5L1396.5 633.5M1396.5 633.5L1398.5 633.5M1398.5 633.5L1399.5 634.5M1399.5 638.5L1400.5 637.5M1399.5 634.5L1400.5 634.5M1400.5 634.5L1400.5 635.5M1400.5 637.5L1400.5 636.5M1400.5 635.5L1400.5 636.5M1404.5 633.5L1410.5 633.5M1405.5 643.5L1406.5 642.5M1405.5 643.5L1410.5 634.5M1405.5 643.5L1410.5 633.5M1406.5 642.5L1410.5 634.5M1406.5 642.5L1410.5 633.5M1410.5 634.5L1410.5 633.5M1413.5 640.5L1413.5 641.5M1413.5 640.5L1414.5 639.5M1413.5 641.5L1414.5 642.5M1414.5 635.5L1414.5 636.5M1414.5 635.5L1414.5 634.5M1414.5 636.5L1414.5 637.5M1414.5 639.5L1414.5 638.5M1414.5 642.5L1414.5 643.5M1414.5 634.5L1415.5 633.5M1414.5 637.5L1415.5 637.5M1414.5 643.5L1415.5 643.5M1414.5 638.5L1416.5 637.5M1415.5 637.5L1417.5 637.5M1415.5 633.5L1417.5 633.5M1415.5 643.5L1417.5 643.5M1416.5 637.5L1418.5 637.5M1417.5 637.5L1418.5 638.5M1417.5 633.5L1419.5 634.5M1417.5 643.5L1419.5 643.5M1418.5 637.5L1419.5 637.5M1418.5 638.5L1419.5 639.5M1419.5 634.5L1419.5 635.5M1419.5 637.5L1419.5 636.5M1419.5 643.5L1419.5 642.5M1419.5 635.5L1419.5 636.5M1419.5 639.5L1420.5 640.5M1419.5 642.5L1420.5 641.5M1420.5 640.5L1420.5 641.5M1423.5 640.5L1427.5 633.5M1423.5 640.5L1430.5 640.5M1427.5 633.5L1427.5 643.5M1432.5 640.5L1437.5 633.5M1432.5 640.5L1439.5 640.5M1437.5 633.5L1437.5 643.5M1450.5 639.5L1458.5 639.5M1469.5 637.5L1469.5 639.5M1469.5 637.5L1470.5 636.5M1469.5 639.5L1470.5 641.5M1470.5 636.5L1470.5 635.5M1470.5 641.5L1470.5 642.5M1470.5 635.5L1471.5 634.5M1470.5 642.5L1471.5 643.5M1471.5 634.5L1472.5 633.5M1471.5 643.5L1472.5 643.5M1472.5 633.5L1474.5 633.5M1472.5 643.5L1474.5 643.5M1474.5 633.5L1475.5 634.5M1474.5 643.5L1475.5 643.5M1475.5 634.5L1476.5 635.5M1475.5 643.5L1476.5 642.5M1476.5 635.5L1476.5 636.5M1476.5 642.5L1476.5 641.5M1480.5 633.5L1480.5 640.5M1480.5 640.5L1480.5 642.5M1480.5 642.5L1481.5 643.5M1481.5 643.5L1483.5 643.5M1483.5 643.5L1483.5 643.5M1483.5 643.5L1485.5 643.5M1485.5 643.5L1486.5 642.5M1486.5 642.5L1486.5 640.5M1486.5 633.5L1486.5 640.5M1489.5 633.5L1495.5 633.5M1492.5 633.5L1492.5 643.5M1498.5 633.5L1498.5 643.5M1498.5 633.5L1504.5 633.5M1498.5 638.5L1502.5 638.5M1498.5 643.5L1504.5 643.5M1507.5 639.5L1515.5 639.5M1520.5 635.5L1521.5 635.5M1521.5 635.5L1523.5 633.5M1523.5 633.5L1523.5 643.5" stroke="#00ff00" stroke-width="1.0" stroke-opacity="1.0" fill="none" stroke-linecap="square"/>
</svg></body></html>
